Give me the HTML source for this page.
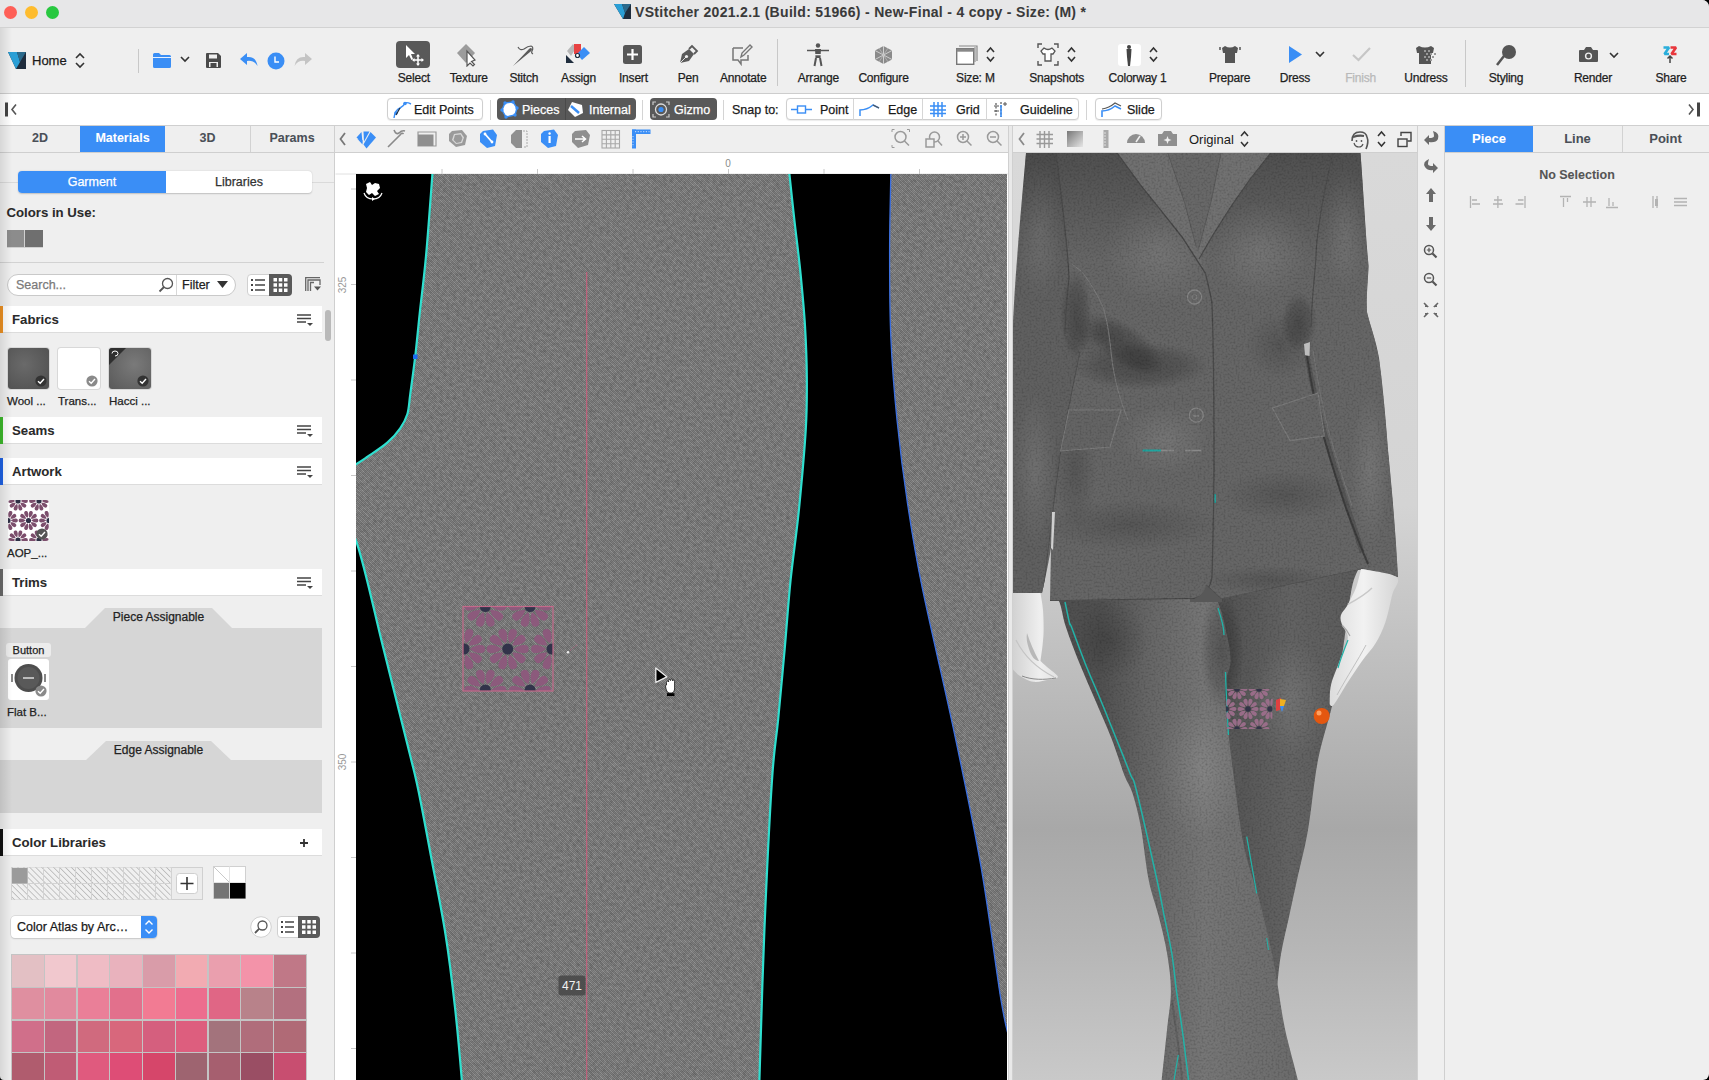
<!DOCTYPE html>
<html><head><meta charset="utf-8">
<style>
*{box-sizing:border-box;margin:0;padding:0}
html,body{width:1709px;height:1080px;overflow:hidden;background:#000}
body{font-family:"Liberation Sans",sans-serif;color:#222;position:relative}
.a{position:absolute}
.t{position:absolute;white-space:nowrap;line-height:1;-webkit-text-stroke:0.25px currentColor}
.c{text-align:center}
.b{font-weight:700}
.t.b{-webkit-text-stroke:0.05px currentColor}
</style></head><body>
<!-- window -->
<div class="a" style="left:0;top:0;width:1709px;height:1080px;background:#efefef;border-radius:0 7px 6px 4px;overflow:hidden">

<!-- TITLE BAR -->
<div class="a" style="left:0;top:0;width:1709px;height:28px;background:#e7e7e8;border-bottom:1px solid #d2d2d2"></div>
<div class="a" style="left:4px;top:6px;width:13px;height:13px;border-radius:50%;background:#fe5f57"></div>
<div class="a" style="left:25px;top:6px;width:13px;height:13px;border-radius:50%;background:#febc2e"></div>
<div class="a" style="left:46px;top:6px;width:13px;height:13px;border-radius:50%;background:#28c840"></div>

<svg class="a" style="left:614px;top:4px" width="17" height="16" viewBox="0 0 17 16"><polygon points="0,0 17,0 17,15 9,15" fill="#1f2d3d"/><polygon points="0,0 8,0 11,9 9,15" fill="#2a9fd6"/><polygon points="8,0 17,0 11,9" fill="#2b6a8c"/></svg>
<div class="t b" style="left:635px;top:5px;font-size:14px;letter-spacing:0.31px;color:#3a3a3a">VStitcher 2021.2.1 (Build: 51966) - New-Final - 4 copy - Size: (M) *</div>


<!-- TOOLBAR -->
<div class="a" style="left:0;top:28px;width:1709px;height:66px;background:#efefef;border-bottom:1px solid #cdcdcd"></div>

<!-- home -->
<svg class="a" style="left:8px;top:52px" width="19" height="17" viewBox="0 0 19 17"><polygon points="0,0 18,0 18,17 8,17" fill="#1f2d3d"/><polygon points="0,0 9,0 12,10 8,17" fill="#2a9fd6"/><polygon points="9,0 18,0 12,10" fill="#2b6a8c"/></svg>
<div class="t" style="left:32px;top:54px;font-size:13px;color:#1a1a1a">Home</div>
<svg class="a" style="left:74px;top:52px" width="12" height="17" viewBox="0 0 12 17"><path d="M2 6 L6 2 L10 6 M2 11 L6 15 L10 11" fill="none" stroke="#333" stroke-width="1.6"/></svg>
<div class="a" style="left:138px;top:49px;width:1px;height:24px;background:#c8c8c8"></div>
<svg class="a" style="left:153px;top:53px" width="18" height="15" viewBox="0 0 18 15"><path d="M0 1.5 Q0 0 1.5 0 H6 L8 2 H16.5 Q18 2 18 3.5 V13.5 Q18 15 16.5 15 H1.5 Q0 15 0 13.5Z" fill="#3a8ef5"/><rect x="0" y="4" width="18" height="1" fill="#e8f1fe"/></svg>
<svg class="a" style="left:180px;top:56px" width="10" height="7" viewBox="0 0 10 7"><path d="M1 1 L5 5 L9 1" fill="none" stroke="#333" stroke-width="1.6"/></svg>
<svg class="a" style="left:206px;top:53px" width="15" height="15" viewBox="0 0 15 15"><path d="M0 1 Q0 0 1 0 H12 L15 3 V14 Q15 15 14 15 H1 Q0 15 0 14Z" fill="#4a4a4a"/><rect x="3" y="1.5" width="8" height="4" fill="#efefef"/><rect x="3" y="9" width="9" height="5" fill="#efefef"/><rect x="4.5" y="10" width="6" height="4" fill="#4a4a4a"/></svg>
<svg class="a" style="left:240px;top:53px" width="18" height="14" viewBox="0 0 18 14"><path d="M7 0 L0 6 L7 12 V8 Q14 7 17.5 13 Q16 3 7 4Z" fill="#3a8ef5"/></svg>
<svg class="a" style="left:267px;top:52px" width="18" height="18" viewBox="0 0 18 18"><circle cx="9" cy="9" r="8.5" fill="#3a8ef5"/><path d="M8 4.5 V10 H12" fill="none" stroke="#fff" stroke-width="1.4"/></svg>
<svg class="a" style="left:294px;top:53px" width="18" height="14" viewBox="0 0 18 14"><path d="M11 0 L18 6 L11 12 V8 Q4 7 0.5 13 Q2 3 11 4Z" fill="#c4c4c4"/></svg>

<!-- select -->
<div class="a" style="left:396px;top:41px;width:34px;height:27px;border-radius:4px;background:#595959"></div>
<svg class="a" style="left:396px;top:41px" width="34" height="27" viewBox="0 0 34 27"><path d="M10 4 V17 L13 14 L15.5 19 L17 18 L15 13 H19Z" fill="#fff"/><path d="M22 14 V24 M17 19 H27" stroke="#fff" stroke-width="1.5"/><path d="M22 13 L20 15.5 H24Z M22 25 L20 22.5 H24Z M16 19 L18.5 17 V21Z M28 19 L25.5 17 V21Z" fill="#fff"/></svg>
<!-- texture -->
<svg class="a" style="left:456px;top:43px" width="24" height="24" viewBox="0 0 24 24"><path d="M10 1 L19 10 L10 20 L1 10Z" fill="#9c9c9c"/><path d="M11 8 L11 23 L14 20 L17 23 L18.5 21.5 L15.5 18.5 L19 17Z" fill="#fff" stroke="#555" stroke-width="1.2"/></svg>
<!-- stitch -->
<svg class="a" style="left:511px;top:43px" width="24" height="24" viewBox="0 0 24 24"><path d="M2 23 L18 6 Q20 4 21 6 Q21 8 19 9Z" fill="#5a5a5a"/><path d="M7 4 Q9 8 13 6 Q17 3 20 3 Q23 4 21 8 Q20 10 22 11" fill="none" stroke="#5a5a5a" stroke-width="1.2"/></svg>
<!-- assign -->
<svg class="a" style="left:566px;top:43px" width="24" height="24" viewBox="0 0 24 24"><path d="M1 8 L7 1 L10 5 L5 13Z" fill="#b7b7b7"/><rect x="8" y="1" width="7" height="10" fill="#e84242"/><path d="M11 11 L18 4 L24 10 L16 17Z" fill="#3a8ef5"/><path d="M0 12 L0 20 L8 20Z" fill="#1f2d3d"/><circle cx="11.5" cy="12.5" r="2" fill="#fff" stroke="#1f2d3d" stroke-width="1.2"/></svg>
<!-- insert -->
<svg class="a" style="left:623px;top:45px" width="19" height="19" viewBox="0 0 19 19"><rect x="0" y="0" width="19" height="19" rx="2.5" fill="#575757"/><path d="M9.5 4 V15 M4 9.5 H15" stroke="#fff" stroke-width="2.2"/></svg>
<!-- pen -->
<svg class="a" style="left:677px;top:44px" width="22" height="22" viewBox="0 0 22 22"><path d="M3 19 L5 10 L12 5 L17 10 L12 17Z" fill="#5a5a5a"/><path d="M12 5 L15 2 L20 7 L17 10" fill="none" stroke="#5a5a5a" stroke-width="1.8"/><circle cx="9.5" cy="12.5" r="1.6" fill="#efefef"/><path d="M3 19 L9 13" stroke="#efefef" stroke-width="0.9"/></svg>
<!-- annotate -->
<svg class="a" style="left:731px;top:43px" width="23" height="23" viewBox="0 0 23 23"><path d="M2 5 H12 M2 5 V17 H7 L10 21 V17 H17 V12" fill="none" stroke="#777" stroke-width="1.5"/><path d="M10 14 L11 10 L19 2 L21 4 L13 12Z" fill="none" stroke="#777" stroke-width="1.4"/></svg>
<div class="a" style="left:777px;top:39px;width:1px;height:47px;background:#c8c8c8"></div>
<!-- arrange -->
<svg class="a" style="left:806px;top:43px" width="24" height="24" viewBox="0 0 24 24"><circle cx="12" cy="2.5" r="2.2" fill="#555"/><path d="M1 7.5 H23" stroke="#555" stroke-width="1.5"/><path d="M9 6 H15 L14.5 15 H9.5Z" fill="#555"/><path d="M10 15 L8.5 23 M14 15 L15.5 23" stroke="#555" stroke-width="2"/><rect x="8.5" y="11" width="7" height="1.3" fill="#efefef"/></svg>
<!-- configure -->
<svg class="a" style="left:874px;top:45px" width="19" height="20" viewBox="0 0 19 20"><path d="M9.5 1 L18 5.5 V14.5 L9.5 19 L1 14.5 V5.5Z" fill="#8a8a8a"/><path d="M9.5 1 V19 M1 5.5 L18 14.5 M18 5.5 L1 14.5" stroke="#cfcfcf" stroke-width="1"/><path d="M5 3 L14 17 M14 3 L5 17" stroke="#bdbdbd" stroke-width="0.7"/></svg>
<!-- size -->
<svg class="a" style="left:956px;top:45px" width="22" height="20" viewBox="0 0 22 20"><rect x="0.7" y="3.7" width="17" height="15.6" fill="#fff" stroke="#777" stroke-width="1.4"/><rect x="0.7" y="3.7" width="17" height="3" fill="#888"/><path d="M3 1 H21 V16" fill="none" stroke="#888" stroke-width="1.2"/><path d="M19 2 V17" stroke="#888" stroke-width="1"/></svg>
<svg class="a" style="left:985px;top:46px" width="11" height="17" viewBox="0 0 11 17"><path d="M2 6 L5.5 2 L9 6 M2 11 L5.5 15 L9 11" fill="none" stroke="#333" stroke-width="1.6"/></svg>
<!-- snapshots -->
<svg class="a" style="left:1037px;top:43px" width="22" height="23" viewBox="0 0 22 23"><path d="M1 5 V1 H5 M17 1 H21 V5 M21 18 V22 H17 M5 22 H1 V18" fill="none" stroke="#555" stroke-width="1.4"/><path d="M7 5 L4 8 L6 11 H8 V18 H14 V11 H16 L18 8 L15 5 Q11 8 7 5Z" fill="#fff" stroke="#555" stroke-width="1.3"/></svg>
<svg class="a" style="left:1066px;top:46px" width="11" height="17" viewBox="0 0 11 17"><path d="M2 6 L5.5 2 L9 6 M2 11 L5.5 15 L9 11" fill="none" stroke="#333" stroke-width="1.6"/></svg>
<!-- colorway -->
<div class="a" style="left:1118px;top:44px;width:23px;height:22px;border-radius:3px;background:#fff"></div>
<svg class="a" style="left:1121px;top:44px" width="16" height="22" viewBox="0 0 16 22"><circle cx="8" cy="3" r="2" fill="#444"/><path d="M5.5 5 H10.5 L10 13 L9 22 H7 L6 13Z" fill="#444"/></svg>
<svg class="a" style="left:1148px;top:46px" width="11" height="17" viewBox="0 0 11 17"><path d="M2 6 L5.5 2 L9 6 M2 11 L5.5 15 L9 11" fill="none" stroke="#333" stroke-width="1.6"/></svg>
<!-- prepare -->
<svg class="a" style="left:1219px;top:46px" width="22" height="17" viewBox="0 0 22 17"><path d="M6 0 L3 2 L4 7 H6 V17 H16 V7 H18 L19 2 L16 0 Q11 3 6 0Z" fill="#555"/><path d="M1 1 V4 M21 1 V4" stroke="#555" stroke-width="1.5"/></svg>
<!-- dress -->
<svg class="a" style="left:1289px;top:46px" width="14" height="17" viewBox="0 0 14 17"><path d="M0 0 L13 8.5 L0 17Z" fill="#3a8ef5"/></svg>
<svg class="a" style="left:1315px;top:51px" width="10" height="7" viewBox="0 0 10 7"><path d="M1 1 L5 5 L9 1" fill="none" stroke="#333" stroke-width="1.6"/></svg>
<!-- finish -->
<svg class="a" style="left:1352px;top:47px" width="19" height="15" viewBox="0 0 19 15"><path d="M1 8 L6.5 13 L18 1" fill="none" stroke="#c6c6c6" stroke-width="2.2"/></svg>
<!-- undress -->
<svg class="a" style="left:1415px;top:45px" width="22" height="20" viewBox="0 0 22 20"><path d="M4 1 L1 3 L2 8 H4 V19 H16 V8 H18 L19 3 L16 1 Q10 4 4 1Z" fill="#555"/><g fill="#999"><rect x="9" y="5" width="2" height="2"/><rect x="13" y="5" width="2" height="2"/><rect x="11" y="8" width="2" height="2"/><rect x="15" y="8" width="2" height="2"/><rect x="9" y="11" width="2" height="2"/><rect x="13" y="11" width="2" height="2"/><rect x="11" y="14" width="2" height="2"/><rect x="15" y="14" width="2" height="2"/><rect x="19" y="8" width="2" height="2"/><rect x="17" y="11" width="2" height="2"/></g></svg>
<div class="a" style="left:1465px;top:40px;width:1px;height:47px;background:#c8c8c8"></div>
<!-- styling -->
<svg class="a" style="left:1496px;top:44px" width="22" height="22" viewBox="0 0 22 22"><circle cx="13" cy="8" r="7" fill="#555"/><path d="M8 12 L1 21" stroke="#555" stroke-width="2.5"/></svg>
<!-- render -->
<svg class="a" style="left:1579px;top:47px" width="19" height="16" viewBox="0 0 19 16"><path d="M0 4 Q0 3 1 3 H5 L7 0 H12 L14 3 H18 Q19 3 19 4 V14 Q19 15 18 15 H1 Q0 15 0 14Z" fill="#555"/><circle cx="9.5" cy="9" r="3.6" fill="#efefef"/><circle cx="9.5" cy="9" r="2.2" fill="#555"/></svg>
<svg class="a" style="left:1609px;top:52px" width="10" height="7" viewBox="0 0 10 7"><path d="M1 1 L5 5 L9 1" fill="none" stroke="#333" stroke-width="1.6"/></svg>
<!-- share -->
<svg class="a" style="left:1662px;top:46px" width="16" height="20" viewBox="0 0 16 20"><path d="M1.5 1.5 H7 L2.5 8 H7" fill="none" stroke="#2aaedb" stroke-width="2.6" stroke-linejoin="bevel"/><path d="M8.5 1.5 H14 L9.5 8 H14.5" fill="none" stroke="#e8373c" stroke-width="2.6" stroke-linejoin="bevel"/><path d="M8 10 V17 M5.5 12.5 L8 10 L10.5 12.5" fill="none" stroke="#444" stroke-width="1.5"/></svg>
<div class="t c" style="left:363.9px;width:100px;top:71.5px;font-size:12px;letter-spacing:-0.2px;color:#1e1e1e">Select</div>
<div class="t c" style="left:418.7px;width:100px;top:71.5px;font-size:12px;letter-spacing:-0.2px;color:#1e1e1e">Texture</div>
<div class="t c" style="left:473.8px;width:100px;top:71.5px;font-size:12px;letter-spacing:-0.2px;color:#1e1e1e">Stitch</div>
<div class="t c" style="left:528.5px;width:100px;top:71.5px;font-size:12px;letter-spacing:-0.2px;color:#1e1e1e">Assign</div>
<div class="t c" style="left:583.4px;width:100px;top:71.5px;font-size:12px;letter-spacing:-0.2px;color:#1e1e1e">Insert</div>
<div class="t c" style="left:638.2px;width:100px;top:71.5px;font-size:12px;letter-spacing:-0.2px;color:#1e1e1e">Pen</div>
<div class="t c" style="left:693.2px;width:100px;top:71.5px;font-size:12px;letter-spacing:-0.2px;color:#1e1e1e">Annotate</div>
<div class="t c" style="left:768.4px;width:100px;top:71.5px;font-size:12px;letter-spacing:-0.2px;color:#1e1e1e">Arrange</div>
<div class="t c" style="left:833.5px;width:100px;top:71.5px;font-size:12px;letter-spacing:-0.2px;color:#1e1e1e">Configure</div>
<div class="t c" style="left:925.4px;width:100px;top:71.5px;font-size:12px;letter-spacing:-0.2px;color:#1e1e1e">Size: M</div>
<div class="t c" style="left:1006.7px;width:100px;top:71.5px;font-size:12px;letter-spacing:-0.2px;color:#1e1e1e">Snapshots</div>
<div class="t c" style="left:1087.5px;width:100px;top:71.5px;font-size:12px;letter-spacing:-0.2px;color:#1e1e1e">Colorway 1</div>
<div class="t c" style="left:1179.6px;width:100px;top:71.5px;font-size:12px;letter-spacing:-0.2px;color:#1e1e1e">Prepare</div>
<div class="t c" style="left:1245.0px;width:100px;top:71.5px;font-size:12px;letter-spacing:-0.2px;color:#1e1e1e">Dress</div>
<div class="t c" style="left:1310.6px;width:100px;top:71.5px;font-size:12px;letter-spacing:-0.2px;color:#b9b9b9">Finish</div>
<div class="t c" style="left:1376.0px;width:100px;top:71.5px;font-size:12px;letter-spacing:-0.2px;color:#1e1e1e">Undress</div>
<div class="t c" style="left:1456.0px;width:100px;top:71.5px;font-size:12px;letter-spacing:-0.2px;color:#1e1e1e">Styling</div>
<div class="t c" style="left:1543.0px;width:100px;top:71.5px;font-size:12px;letter-spacing:-0.2px;color:#1e1e1e">Render</div>
<div class="t c" style="left:1621.0px;width:100px;top:71.5px;font-size:12px;letter-spacing:-0.2px;color:#1e1e1e">Share</div>

<!-- ROW 2 -->
<div class="a" style="left:0;top:94px;width:1709px;height:32px;background:#fff;border-bottom:1px solid #cfcfcf"></div>

<svg class="a" style="left:5px;top:102px" width="13" height="15" viewBox="0 0 13 15"><rect x="0" y="0.5" width="3" height="14" fill="#444"/><path d="M11 2.5 L7 7.5 L11 12.5" fill="none" stroke="#555" stroke-width="1.6"/></svg>
<svg class="a" style="left:1687px;top:102px" width="13" height="15" viewBox="0 0 13 15"><rect x="10" y="0.5" width="3" height="14" fill="#444"/><path d="M2 2.5 L6 7.5 L2 12.5" fill="none" stroke="#555" stroke-width="1.6"/></svg>
<!-- edit points -->
<div class="a" style="left:387px;top:98px;width:96px;height:22px;border:1px solid #cfcfcf;border-radius:4px;background:#fff;box-shadow:0 0.5px 1px rgba(0,0,0,.08)"></div>
<svg class="a" style="left:392px;top:101px" width="20" height="18" viewBox="0 0 20 18"><path d="M2 17 Q3 9 8 7 Q12 5 13 2 Q15 1 19 3" fill="none" stroke="#3a8ef5" stroke-width="1.4"/><circle cx="4" cy="12" r="1.8" fill="#3a8ef5"/><circle cx="13" cy="2.5" r="1.8" fill="#3a8ef5"/><path d="M8 7 L4 14" stroke="#1f2d3d" stroke-width="1.2"/></svg>
<div class="t" style="left:414px;top:104px;font-size:12.5px;color:#1a1a1a">Edit Points</div>
<div class="a" style="left:490px;top:100px;width:1px;height:20px;background:#d4d4d4"></div>
<!-- pieces internal -->
<div class="a" style="left:497px;top:98px;width:139px;height:22px;border-radius:4px;background:#595959"></div>
<div class="a" style="left:565px;top:98px;width:1px;height:22px;background:#4a4a4a"></div>
<svg class="a" style="left:500px;top:100px" width="19" height="19" viewBox="0 0 19 19"><path d="M5 3 L13 2 L17 8 L15 15 L6 17 L2 10Z" fill="#fff" stroke="#3a8ef5" stroke-width="1.4"/><g fill="#3a8ef5"><circle cx="5" cy="3" r="1.7"/><circle cx="13" cy="2" r="1.7"/><circle cx="17" cy="8" r="1.7"/><circle cx="15" cy="15" r="1.7"/><circle cx="6" cy="17" r="1.7"/><circle cx="2" cy="10" r="1.7"/></g></svg>
<div class="t" style="left:522px;top:104px;font-size:12.5px;color:#fff">Pieces</div>
<svg class="a" style="left:567px;top:101px" width="17" height="17" viewBox="0 0 17 17"><path d="M5 1 L15 4 L16 12 L8 16 L1 9Z" fill="#fff"/><path d="M4 5 L12 12" stroke="#3a8ef5" stroke-width="2.5"/></svg>
<div class="t" style="left:589px;top:104px;font-size:12.5px;color:#fff">Internal</div>
<div class="a" style="left:642px;top:100px;width:1px;height:20px;background:#d4d4d4"></div>
<!-- gizmo -->
<div class="a" style="left:650px;top:98px;width:67px;height:22px;border-radius:4px;background:#595959"></div>
<svg class="a" style="left:652px;top:101px" width="18" height="17" viewBox="0 0 18 17"><path d="M1 4 V1 H4 M14 1 H17 V4 M17 13 V16 H14 M4 16 H1 V13" fill="none" stroke="#ccc" stroke-width="1.2"/><circle cx="9" cy="8.5" r="5.5" fill="none" stroke="#ddd" stroke-width="1.3"/><circle cx="9" cy="8.5" r="2.6" fill="#3a8ef5"/></svg>
<div class="t" style="left:674px;top:104px;font-size:12.5px;color:#fff">Gizmo</div>
<div class="a" style="left:723px;top:100px;width:1px;height:20px;background:#d4d4d4"></div>
<div class="t" style="left:732px;top:104px;font-size:12.5px;color:#1a1a1a">Snap to:</div>
<!-- snap group -->
<div class="a" style="left:786px;top:98px;width:293px;height:22px;border:1px solid #cfcfcf;border-radius:4px;background:#fff;box-shadow:0 0.5px 1px rgba(0,0,0,.08)"></div>
<div class="a" style="left:853px;top:99px;width:1px;height:21px;background:#d6d6d6"></div>
<div class="a" style="left:922px;top:99px;width:1px;height:21px;background:#d6d6d6"></div>
<div class="a" style="left:986px;top:99px;width:1px;height:21px;background:#d6d6d6"></div>
<svg class="a" style="left:791px;top:103px" width="21" height="13" viewBox="0 0 21 13"><path d="M0 6.5 H6 M15 6.5 H21" stroke="#3a8ef5" stroke-width="1.3"/><rect x="6.5" y="3" width="8" height="7" fill="none" stroke="#3a8ef5" stroke-width="1.4"/></svg>
<div class="t" style="left:820px;top:104px;font-size:12.5px;color:#1a1a1a">Point</div>
<svg class="a" style="left:859px;top:102px" width="22" height="15" viewBox="0 0 22 15"><path d="M1 14 V8 Q8 8 14 3 L20 6" fill="none" stroke="#3a8ef5" stroke-width="1.5"/><path d="M14 3 L20 6" stroke="#555" stroke-width="1.2"/></svg>
<div class="t" style="left:888px;top:104px;font-size:12.5px;color:#1a1a1a">Edge</div>
<svg class="a" style="left:930px;top:102px" width="16" height="15" viewBox="0 0 16 15"><path d="M4 0 V15 M8 0 V15 M12 0 V15 M0 4 H16 M0 8 H16 M0 11.5 H16" stroke="#3a8ef5" stroke-width="1.5"/></svg>
<div class="t" style="left:956px;top:104px;font-size:12.5px;color:#1a1a1a">Grid</div>
<svg class="a" style="left:993px;top:101px" width="16" height="17" viewBox="0 0 16 17"><path d="M3 2 V16 M8 1 V16" stroke="#555" stroke-width="1.2" stroke-dasharray="2 1.5"/><path d="M8 4 V16" stroke="#3a8ef5" stroke-width="1.6"/><path d="M1 5 H6 M1 10 H6 M12 1 V5 M10 3 H14" stroke="#555" stroke-width="1"/></svg>
<div class="t" style="left:1020px;top:104px;font-size:12.5px;color:#1a1a1a">Guideline</div>
<div class="a" style="left:1086px;top:100px;width:1px;height:20px;background:#d4d4d4"></div>
<!-- slide -->
<div class="a" style="left:1095px;top:98px;width:67px;height:22px;border:1px solid #cfcfcf;border-radius:4px;background:#fff;box-shadow:0 0.5px 1px rgba(0,0,0,.08)"></div>
<svg class="a" style="left:1100px;top:101px" width="22" height="17" viewBox="0 0 22 17"><path d="M2 16 V10 Q9 10 15 5 L21 8" fill="none" stroke="#3a8ef5" stroke-width="1.6"/><path d="M2 8 Q9 7 15 2 L21 5" fill="none" stroke="#555" stroke-width="1.1"/></svg>
<div class="t" style="left:1127px;top:104px;font-size:12.5px;color:#1a1a1a">Slide</div>


<!-- LEFT PANEL -->

<!-- left panel tabs -->
<div class="a" style="left:0;top:126px;width:334px;height:27px;background:#efefef;border-bottom:1px solid #cfcfcf"></div>
<div class="a" style="left:80px;top:126px;width:85px;height:26px;background:#3a8ef6"></div>
<div class="a" style="left:250px;top:126px;width:1px;height:26px;background:#d2d2d2"></div>
<div class="a" style="left:334px;top:126px;width:1px;height:954px;background:#cfcfcf"></div>
<div class="t c b" style="left:0;width:80px;top:132px;font-size:12.5px;color:#4a4f57">2D</div>
<div class="t c b" style="left:80px;width:85px;top:132px;font-size:12.5px;color:#fff">Materials</div>
<div class="t c b" style="left:165px;width:85px;top:132px;font-size:12.5px;color:#4a4f57">3D</div>
<div class="t c b" style="left:250px;width:84px;top:132px;font-size:12.5px;color:#4a4f57">Params</div>

<!-- garment/libraries -->
<div class="a" style="left:0;top:182px;width:334px;height:1px;background:#dadada"></div>
<div class="a" style="left:18px;top:171px;width:294px;height:22px;border-radius:4px;background:#fff;box-shadow:0 0.5px 1.5px rgba(0,0,0,.2)"></div>
<div class="a" style="left:18px;top:171px;width:148px;height:22px;border-radius:4px 0 0 4px;background:#3a8ef6"></div>
<div class="t c" style="left:18px;width:148px;top:176px;font-size:12.5px;color:#fff">Garment</div>
<div class="t c" style="left:166px;width:146px;top:176px;font-size:12.5px;color:#333">Libraries</div>

<div class="t b" style="left:6.5px;top:206px;font-size:13.2px;color:#2a2a2a">Colors in Use:</div>
<div class="a" style="left:7px;top:230px;width:36px;height:18px;background:#d0d0d0"></div>
<div class="a" style="left:7px;top:230px;width:17px;height:17px;background:#8c8c8c"></div>
<div class="a" style="left:25px;top:230px;width:18px;height:17px;background:#6f6f6f"></div>
<div class="a" style="left:0;top:262px;width:324px;height:1px;background:#d2d2d2"></div>

<!-- search -->
<div class="a" style="left:7px;top:274px;width:229px;height:22px;border-radius:11px;background:#fff;border:1px solid #c9c9c9"></div>
<div class="t" style="left:16px;top:279px;font-size:12.5px;color:#7a7a7a">Search...</div>
<svg class="a" style="left:158px;top:277px" width="16" height="16" viewBox="0 0 16 16"><circle cx="9.5" cy="6.5" r="5" fill="none" stroke="#555" stroke-width="1.3"/><path d="M6 10 L1.5 14.5" stroke="#555" stroke-width="1.8"/></svg>
<div class="a" style="left:176px;top:275px;width:1px;height:20px;background:#d8d8d8"></div>
<div class="t" style="left:182px;top:279px;font-size:12.5px;color:#222">Filter</div>
<svg class="a" style="left:217px;top:281px" width="11" height="7" viewBox="0 0 11 7"><path d="M0 0 H11 L5.5 7Z" fill="#333"/></svg>
<div class="a" style="left:247px;top:274px;width:45px;height:22px;border-radius:4px;background:#fff;border:1px solid #d0d0d0"></div>
<div class="a" style="left:269px;top:274px;width:23px;height:22px;border-radius:0 4px 4px 0;background:#5a5a5a"></div>
<svg class="a" style="left:250px;top:278px" width="16" height="14" viewBox="0 0 16 14"><path d="M5 2 H15 M5 7 H15 M5 12 H15" stroke="#444" stroke-width="1.3"/><path d="M1 2 H3 M1 7 H3 M1 12 H3" stroke="#444" stroke-width="2"/></svg>
<svg class="a" style="left:273px;top:278px" width="15" height="14" viewBox="0 0 15 14"><g fill="#fff"><rect x="0.5" y="0" width="3.5" height="3.5"/><rect x="5.75" y="0" width="3.5" height="3.5"/><rect x="11" y="0" width="3.5" height="3.5"/><rect x="0.5" y="5.25" width="3.5" height="3.5"/><rect x="5.75" y="5.25" width="3.5" height="3.5"/><rect x="11" y="5.25" width="3.5" height="3.5"/><rect x="0.5" y="10.5" width="3.5" height="3.5"/><rect x="5.75" y="10.5" width="3.5" height="3.5"/><rect x="11" y="10.5" width="3.5" height="3.5"/></g></svg>
<svg class="a" style="left:305px;top:277px" width="16" height="15" viewBox="0 0 16 15"><path d="M0.7 14 V0.7 H15 M3 14 V3 H15 V8 M5.5 14 V5.5 H9" fill="none" stroke="#666" stroke-width="1.3"/><path d="M9 9.5 H16 L12.5 13.5Z" fill="#555"/></svg>
<div class="a" style="left:0;top:306px;width:322px;height:27px;background:#fff;border-bottom:1px solid #dcdcdc"></div>
<div class="a" style="left:0;top:306px;width:3px;height:27px;background:#ee9223"></div>
<div class="t b" style="left:12px;top:313px;font-size:13.2px;color:#2a2a2a">Fabrics</div>
<svg class="a" style="left:297px;top:314px" width="16" height="13" viewBox="0 0 16 13"><path d="M0 1 H14 M0 4.5 H14 M0 8 H9" stroke="#444" stroke-width="1.6"/><path d="M10 9 H16 L13 12Z" fill="#444"/></svg>
<div class="a" style="left:325px;top:310px;width:6px;height:31px;border-radius:3px;background:#b9b9b9"></div>
<div class="a" style="left:8px;top:348px;width:41px;height:41px;border-radius:3px;background:radial-gradient(circle at 40% 40%,#6a6a6a,#4e4e4e);box-shadow:0 0 0 1px #d8d8d8"></div>
<svg class="a" style="left:35px;top:375px" width="12" height="12" viewBox="0 0 12 12"><circle cx="6" cy="6" r="5.6" fill="#333"/><path d="M3 6.2 L5.2 8.2 L9 4" fill="none" stroke="#fff" stroke-width="1.4"/></svg>
<div class="a" style="left:58px;top:348px;width:42px;height:41px;border-radius:3px;background:#fff;box-shadow:0 0 0 1px #d8d8d8"></div>
<svg class="a" style="left:86px;top:375px" width="12" height="12" viewBox="0 0 12 12"><circle cx="6" cy="6" r="5.6" fill="#8a8a8a"/><path d="M3 6.2 L5.2 8.2 L9 4" fill="none" stroke="#fff" stroke-width="1.4"/></svg>
<div class="a" style="left:109px;top:348px;width:42px;height:41px;border-radius:3px;background:radial-gradient(circle at 60% 40%,#7a7a7a,#595959);box-shadow:0 0 0 1px #d8d8d8;overflow:hidden"><div class="a" style="left:0;top:0;width:0;height:0;border-top:17px solid #2f2f2f;border-right:17px solid transparent"></div></div>
<svg class="a" style="left:111px;top:350px" width="8" height="7" viewBox="0 0 8 7"><path d="M1 3.5 A3 2.5 0 1 1 4 6" fill="none" stroke="#fff" stroke-width="1"/></svg>
<svg class="a" style="left:137px;top:375px" width="12" height="12" viewBox="0 0 12 12"><circle cx="6" cy="6" r="5.6" fill="#333"/><path d="M3 6.2 L5.2 8.2 L9 4" fill="none" stroke="#fff" stroke-width="1.4"/></svg>
<div class="t" style="left:7px;top:396px;font-size:11.5px;color:#222">Wool ...</div>
<div class="t" style="left:58px;top:396px;font-size:11.5px;color:#222">Trans...</div>
<div class="t" style="left:109px;top:396px;font-size:11.5px;color:#222">Hacci ...</div>
<div class="a" style="left:0;top:417px;width:322px;height:27px;background:#fff;border-bottom:1px solid #dcdcdc"></div>
<div class="a" style="left:0;top:417px;width:3px;height:27px;background:#3dba2c"></div>
<div class="t b" style="left:12px;top:424px;font-size:13.2px;color:#2a2a2a">Seams</div>
<svg class="a" style="left:297px;top:425px" width="16" height="13" viewBox="0 0 16 13"><path d="M0 1 H14 M0 4.5 H14 M0 8 H9" stroke="#444" stroke-width="1.6"/><path d="M10 9 H16 L13 12Z" fill="#444"/></svg><div class="a" style="left:0;top:458px;width:322px;height:27px;background:#fff;border-bottom:1px solid #dcdcdc"></div>
<div class="a" style="left:0;top:458px;width:3px;height:27px;background:#1f63e6"></div>
<div class="t b" style="left:12px;top:465px;font-size:13.2px;color:#2a2a2a">Artwork</div>
<svg class="a" style="left:297px;top:466px" width="16" height="13" viewBox="0 0 16 13"><path d="M0 1 H14 M0 4.5 H14 M0 8 H9" stroke="#444" stroke-width="1.6"/><path d="M10 9 H16 L13 12Z" fill="#444"/></svg><svg class="a" style="left:8px;top:500px" width="41" height="41" viewBox="0 0 41 41"><clipPath id="cpa"><rect width="41" height="41" rx="3"/></clipPath><rect width="41" height="41" rx="3" fill="#fff"/><g clip-path="url(#cpa)"><g transform="translate(10.0 1.0) scale(0.470)"><path d="M0 -6 C-1.8 -8 -4.6 -13 -4 -17 A4 4 0 0 1 4 -17 C4.6 -13 1.8 -8 0 -6Z" fill="#7c4e6c" transform="rotate(18)"/><path d="M0 -6 C-1.8 -8 -4.6 -13 -4 -17 A4 4 0 0 1 4 -17 C4.6 -13 1.8 -8 0 -6Z" fill="#7c4e6c" transform="rotate(54)"/><path d="M0 -6 C-1.8 -8 -4.6 -13 -4 -17 A4 4 0 0 1 4 -17 C4.6 -13 1.8 -8 0 -6Z" fill="#7c4e6c" transform="rotate(90)"/><path d="M0 -6 C-1.8 -8 -4.6 -13 -4 -17 A4 4 0 0 1 4 -17 C4.6 -13 1.8 -8 0 -6Z" fill="#7c4e6c" transform="rotate(126)"/><path d="M0 -6 C-1.8 -8 -4.6 -13 -4 -17 A4 4 0 0 1 4 -17 C4.6 -13 1.8 -8 0 -6Z" fill="#7c4e6c" transform="rotate(162)"/><path d="M0 -6 C-1.8 -8 -4.6 -13 -4 -17 A4 4 0 0 1 4 -17 C4.6 -13 1.8 -8 0 -6Z" fill="#7c4e6c" transform="rotate(198)"/><path d="M0 -6 C-1.8 -8 -4.6 -13 -4 -17 A4 4 0 0 1 4 -17 C4.6 -13 1.8 -8 0 -6Z" fill="#7c4e6c" transform="rotate(234)"/><path d="M0 -6 C-1.8 -8 -4.6 -13 -4 -17 A4 4 0 0 1 4 -17 C4.6 -13 1.8 -8 0 -6Z" fill="#7c4e6c" transform="rotate(270)"/><path d="M0 -6 C-1.8 -8 -4.6 -13 -4 -17 A4 4 0 0 1 4 -17 C4.6 -13 1.8 -8 0 -6Z" fill="#7c4e6c" transform="rotate(306)"/><path d="M0 -6 C-1.8 -8 -4.6 -13 -4 -17 A4 4 0 0 1 4 -17 C4.6 -13 1.8 -8 0 -6Z" fill="#7c4e6c" transform="rotate(342)"/><circle r="5.5" fill="#2e2f45"/></g><g transform="translate(31.0 1.0) scale(0.470)"><path d="M0 -6 C-1.8 -8 -4.6 -13 -4 -17 A4 4 0 0 1 4 -17 C4.6 -13 1.8 -8 0 -6Z" fill="#7c4e6c" transform="rotate(18)"/><path d="M0 -6 C-1.8 -8 -4.6 -13 -4 -17 A4 4 0 0 1 4 -17 C4.6 -13 1.8 -8 0 -6Z" fill="#7c4e6c" transform="rotate(54)"/><path d="M0 -6 C-1.8 -8 -4.6 -13 -4 -17 A4 4 0 0 1 4 -17 C4.6 -13 1.8 -8 0 -6Z" fill="#7c4e6c" transform="rotate(90)"/><path d="M0 -6 C-1.8 -8 -4.6 -13 -4 -17 A4 4 0 0 1 4 -17 C4.6 -13 1.8 -8 0 -6Z" fill="#7c4e6c" transform="rotate(126)"/><path d="M0 -6 C-1.8 -8 -4.6 -13 -4 -17 A4 4 0 0 1 4 -17 C4.6 -13 1.8 -8 0 -6Z" fill="#7c4e6c" transform="rotate(162)"/><path d="M0 -6 C-1.8 -8 -4.6 -13 -4 -17 A4 4 0 0 1 4 -17 C4.6 -13 1.8 -8 0 -6Z" fill="#7c4e6c" transform="rotate(198)"/><path d="M0 -6 C-1.8 -8 -4.6 -13 -4 -17 A4 4 0 0 1 4 -17 C4.6 -13 1.8 -8 0 -6Z" fill="#7c4e6c" transform="rotate(234)"/><path d="M0 -6 C-1.8 -8 -4.6 -13 -4 -17 A4 4 0 0 1 4 -17 C4.6 -13 1.8 -8 0 -6Z" fill="#7c4e6c" transform="rotate(270)"/><path d="M0 -6 C-1.8 -8 -4.6 -13 -4 -17 A4 4 0 0 1 4 -17 C4.6 -13 1.8 -8 0 -6Z" fill="#7c4e6c" transform="rotate(306)"/><path d="M0 -6 C-1.8 -8 -4.6 -13 -4 -17 A4 4 0 0 1 4 -17 C4.6 -13 1.8 -8 0 -6Z" fill="#7c4e6c" transform="rotate(342)"/><circle r="5.5" fill="#2e2f45"/></g><g transform="translate(0.0 20.5) scale(0.470)"><path d="M0 -6 C-1.8 -8 -4.6 -13 -4 -17 A4 4 0 0 1 4 -17 C4.6 -13 1.8 -8 0 -6Z" fill="#7c4e6c" transform="rotate(18)"/><path d="M0 -6 C-1.8 -8 -4.6 -13 -4 -17 A4 4 0 0 1 4 -17 C4.6 -13 1.8 -8 0 -6Z" fill="#7c4e6c" transform="rotate(54)"/><path d="M0 -6 C-1.8 -8 -4.6 -13 -4 -17 A4 4 0 0 1 4 -17 C4.6 -13 1.8 -8 0 -6Z" fill="#7c4e6c" transform="rotate(90)"/><path d="M0 -6 C-1.8 -8 -4.6 -13 -4 -17 A4 4 0 0 1 4 -17 C4.6 -13 1.8 -8 0 -6Z" fill="#7c4e6c" transform="rotate(126)"/><path d="M0 -6 C-1.8 -8 -4.6 -13 -4 -17 A4 4 0 0 1 4 -17 C4.6 -13 1.8 -8 0 -6Z" fill="#7c4e6c" transform="rotate(162)"/><path d="M0 -6 C-1.8 -8 -4.6 -13 -4 -17 A4 4 0 0 1 4 -17 C4.6 -13 1.8 -8 0 -6Z" fill="#7c4e6c" transform="rotate(198)"/><path d="M0 -6 C-1.8 -8 -4.6 -13 -4 -17 A4 4 0 0 1 4 -17 C4.6 -13 1.8 -8 0 -6Z" fill="#7c4e6c" transform="rotate(234)"/><path d="M0 -6 C-1.8 -8 -4.6 -13 -4 -17 A4 4 0 0 1 4 -17 C4.6 -13 1.8 -8 0 -6Z" fill="#7c4e6c" transform="rotate(270)"/><path d="M0 -6 C-1.8 -8 -4.6 -13 -4 -17 A4 4 0 0 1 4 -17 C4.6 -13 1.8 -8 0 -6Z" fill="#7c4e6c" transform="rotate(306)"/><path d="M0 -6 C-1.8 -8 -4.6 -13 -4 -17 A4 4 0 0 1 4 -17 C4.6 -13 1.8 -8 0 -6Z" fill="#7c4e6c" transform="rotate(342)"/><circle r="5.5" fill="#2e2f45"/></g><g transform="translate(20.5 20.5) scale(0.470)"><path d="M0 -6 C-1.8 -8 -4.6 -13 -4 -17 A4 4 0 0 1 4 -17 C4.6 -13 1.8 -8 0 -6Z" fill="#7c4e6c" transform="rotate(18)"/><path d="M0 -6 C-1.8 -8 -4.6 -13 -4 -17 A4 4 0 0 1 4 -17 C4.6 -13 1.8 -8 0 -6Z" fill="#7c4e6c" transform="rotate(54)"/><path d="M0 -6 C-1.8 -8 -4.6 -13 -4 -17 A4 4 0 0 1 4 -17 C4.6 -13 1.8 -8 0 -6Z" fill="#7c4e6c" transform="rotate(90)"/><path d="M0 -6 C-1.8 -8 -4.6 -13 -4 -17 A4 4 0 0 1 4 -17 C4.6 -13 1.8 -8 0 -6Z" fill="#7c4e6c" transform="rotate(126)"/><path d="M0 -6 C-1.8 -8 -4.6 -13 -4 -17 A4 4 0 0 1 4 -17 C4.6 -13 1.8 -8 0 -6Z" fill="#7c4e6c" transform="rotate(162)"/><path d="M0 -6 C-1.8 -8 -4.6 -13 -4 -17 A4 4 0 0 1 4 -17 C4.6 -13 1.8 -8 0 -6Z" fill="#7c4e6c" transform="rotate(198)"/><path d="M0 -6 C-1.8 -8 -4.6 -13 -4 -17 A4 4 0 0 1 4 -17 C4.6 -13 1.8 -8 0 -6Z" fill="#7c4e6c" transform="rotate(234)"/><path d="M0 -6 C-1.8 -8 -4.6 -13 -4 -17 A4 4 0 0 1 4 -17 C4.6 -13 1.8 -8 0 -6Z" fill="#7c4e6c" transform="rotate(270)"/><path d="M0 -6 C-1.8 -8 -4.6 -13 -4 -17 A4 4 0 0 1 4 -17 C4.6 -13 1.8 -8 0 -6Z" fill="#7c4e6c" transform="rotate(306)"/><path d="M0 -6 C-1.8 -8 -4.6 -13 -4 -17 A4 4 0 0 1 4 -17 C4.6 -13 1.8 -8 0 -6Z" fill="#7c4e6c" transform="rotate(342)"/><circle r="5.5" fill="#2e2f45"/></g><g transform="translate(41.0 20.5) scale(0.470)"><path d="M0 -6 C-1.8 -8 -4.6 -13 -4 -17 A4 4 0 0 1 4 -17 C4.6 -13 1.8 -8 0 -6Z" fill="#7c4e6c" transform="rotate(18)"/><path d="M0 -6 C-1.8 -8 -4.6 -13 -4 -17 A4 4 0 0 1 4 -17 C4.6 -13 1.8 -8 0 -6Z" fill="#7c4e6c" transform="rotate(54)"/><path d="M0 -6 C-1.8 -8 -4.6 -13 -4 -17 A4 4 0 0 1 4 -17 C4.6 -13 1.8 -8 0 -6Z" fill="#7c4e6c" transform="rotate(90)"/><path d="M0 -6 C-1.8 -8 -4.6 -13 -4 -17 A4 4 0 0 1 4 -17 C4.6 -13 1.8 -8 0 -6Z" fill="#7c4e6c" transform="rotate(126)"/><path d="M0 -6 C-1.8 -8 -4.6 -13 -4 -17 A4 4 0 0 1 4 -17 C4.6 -13 1.8 -8 0 -6Z" fill="#7c4e6c" transform="rotate(162)"/><path d="M0 -6 C-1.8 -8 -4.6 -13 -4 -17 A4 4 0 0 1 4 -17 C4.6 -13 1.8 -8 0 -6Z" fill="#7c4e6c" transform="rotate(198)"/><path d="M0 -6 C-1.8 -8 -4.6 -13 -4 -17 A4 4 0 0 1 4 -17 C4.6 -13 1.8 -8 0 -6Z" fill="#7c4e6c" transform="rotate(234)"/><path d="M0 -6 C-1.8 -8 -4.6 -13 -4 -17 A4 4 0 0 1 4 -17 C4.6 -13 1.8 -8 0 -6Z" fill="#7c4e6c" transform="rotate(270)"/><path d="M0 -6 C-1.8 -8 -4.6 -13 -4 -17 A4 4 0 0 1 4 -17 C4.6 -13 1.8 -8 0 -6Z" fill="#7c4e6c" transform="rotate(306)"/><path d="M0 -6 C-1.8 -8 -4.6 -13 -4 -17 A4 4 0 0 1 4 -17 C4.6 -13 1.8 -8 0 -6Z" fill="#7c4e6c" transform="rotate(342)"/><circle r="5.5" fill="#2e2f45"/></g><g transform="translate(10.0 40.0) scale(0.470)"><path d="M0 -6 C-1.8 -8 -4.6 -13 -4 -17 A4 4 0 0 1 4 -17 C4.6 -13 1.8 -8 0 -6Z" fill="#7c4e6c" transform="rotate(18)"/><path d="M0 -6 C-1.8 -8 -4.6 -13 -4 -17 A4 4 0 0 1 4 -17 C4.6 -13 1.8 -8 0 -6Z" fill="#7c4e6c" transform="rotate(54)"/><path d="M0 -6 C-1.8 -8 -4.6 -13 -4 -17 A4 4 0 0 1 4 -17 C4.6 -13 1.8 -8 0 -6Z" fill="#7c4e6c" transform="rotate(90)"/><path d="M0 -6 C-1.8 -8 -4.6 -13 -4 -17 A4 4 0 0 1 4 -17 C4.6 -13 1.8 -8 0 -6Z" fill="#7c4e6c" transform="rotate(126)"/><path d="M0 -6 C-1.8 -8 -4.6 -13 -4 -17 A4 4 0 0 1 4 -17 C4.6 -13 1.8 -8 0 -6Z" fill="#7c4e6c" transform="rotate(162)"/><path d="M0 -6 C-1.8 -8 -4.6 -13 -4 -17 A4 4 0 0 1 4 -17 C4.6 -13 1.8 -8 0 -6Z" fill="#7c4e6c" transform="rotate(198)"/><path d="M0 -6 C-1.8 -8 -4.6 -13 -4 -17 A4 4 0 0 1 4 -17 C4.6 -13 1.8 -8 0 -6Z" fill="#7c4e6c" transform="rotate(234)"/><path d="M0 -6 C-1.8 -8 -4.6 -13 -4 -17 A4 4 0 0 1 4 -17 C4.6 -13 1.8 -8 0 -6Z" fill="#7c4e6c" transform="rotate(270)"/><path d="M0 -6 C-1.8 -8 -4.6 -13 -4 -17 A4 4 0 0 1 4 -17 C4.6 -13 1.8 -8 0 -6Z" fill="#7c4e6c" transform="rotate(306)"/><path d="M0 -6 C-1.8 -8 -4.6 -13 -4 -17 A4 4 0 0 1 4 -17 C4.6 -13 1.8 -8 0 -6Z" fill="#7c4e6c" transform="rotate(342)"/><circle r="5.5" fill="#2e2f45"/></g><g transform="translate(31.0 40.0) scale(0.470)"><path d="M0 -6 C-1.8 -8 -4.6 -13 -4 -17 A4 4 0 0 1 4 -17 C4.6 -13 1.8 -8 0 -6Z" fill="#7c4e6c" transform="rotate(18)"/><path d="M0 -6 C-1.8 -8 -4.6 -13 -4 -17 A4 4 0 0 1 4 -17 C4.6 -13 1.8 -8 0 -6Z" fill="#7c4e6c" transform="rotate(54)"/><path d="M0 -6 C-1.8 -8 -4.6 -13 -4 -17 A4 4 0 0 1 4 -17 C4.6 -13 1.8 -8 0 -6Z" fill="#7c4e6c" transform="rotate(90)"/><path d="M0 -6 C-1.8 -8 -4.6 -13 -4 -17 A4 4 0 0 1 4 -17 C4.6 -13 1.8 -8 0 -6Z" fill="#7c4e6c" transform="rotate(126)"/><path d="M0 -6 C-1.8 -8 -4.6 -13 -4 -17 A4 4 0 0 1 4 -17 C4.6 -13 1.8 -8 0 -6Z" fill="#7c4e6c" transform="rotate(162)"/><path d="M0 -6 C-1.8 -8 -4.6 -13 -4 -17 A4 4 0 0 1 4 -17 C4.6 -13 1.8 -8 0 -6Z" fill="#7c4e6c" transform="rotate(198)"/><path d="M0 -6 C-1.8 -8 -4.6 -13 -4 -17 A4 4 0 0 1 4 -17 C4.6 -13 1.8 -8 0 -6Z" fill="#7c4e6c" transform="rotate(234)"/><path d="M0 -6 C-1.8 -8 -4.6 -13 -4 -17 A4 4 0 0 1 4 -17 C4.6 -13 1.8 -8 0 -6Z" fill="#7c4e6c" transform="rotate(270)"/><path d="M0 -6 C-1.8 -8 -4.6 -13 -4 -17 A4 4 0 0 1 4 -17 C4.6 -13 1.8 -8 0 -6Z" fill="#7c4e6c" transform="rotate(306)"/><path d="M0 -6 C-1.8 -8 -4.6 -13 -4 -17 A4 4 0 0 1 4 -17 C4.6 -13 1.8 -8 0 -6Z" fill="#7c4e6c" transform="rotate(342)"/><circle r="5.5" fill="#2e2f45"/></g></g></svg><svg class="a" style="left:36px;top:528px" width="12" height="12" viewBox="0 0 12 12"><circle cx="6" cy="6" r="5.6" fill="#555"/><path d="M3 6.2 L5.2 8.2 L9 4" fill="none" stroke="#fff" stroke-width="1.4"/></svg>
<div class="t" style="left:7px;top:548px;font-size:11.5px;color:#222">AOP_...</div>
<div class="a" style="left:0;top:569px;width:322px;height:27px;background:#fff;border-bottom:1px solid #dcdcdc"></div>
<div class="a" style="left:0;top:569px;width:3px;height:27px;background:#6a6a6a"></div>
<div class="t b" style="left:12px;top:576px;font-size:13.2px;color:#2a2a2a">Trims</div>
<svg class="a" style="left:297px;top:577px" width="16" height="13" viewBox="0 0 16 13"><path d="M0 1 H14 M0 4.5 H14 M0 8 H9" stroke="#444" stroke-width="1.6"/><path d="M10 9 H16 L13 12Z" fill="#444"/></svg>
<svg class="a" style="left:0;top:607px" width="322" height="122" viewBox="0 0 322 122"><path d="M85 21 L105 1 H212 L232 21 H322 V121 H0 V21Z" fill="#d6d6d6"/></svg>
<div class="t c" style="left:85px;width:147px;top:611px;font-size:12px;color:#222">Piece Assignable</div>
<div class="a" style="left:6px;top:643px;width:45px;height:14px;border-radius:3px;background:#ececec"></div>
<div class="t c" style="left:6px;width:45px;top:645px;font-size:11px;color:#222">Button</div>
<div class="a" style="left:8px;top:659px;width:41px;height:41px;border-radius:3px;background:#fff"></div>
<svg class="a" style="left:8px;top:659px" width="41" height="41" viewBox="0 0 41 41"><circle cx="20.5" cy="19" r="14" fill="#4d4d4d"/><circle cx="20.5" cy="19" r="11" fill="#595959"/><path d="M15 19 H26" stroke="#ddd" stroke-width="1.5"/><rect x="3" y="15" width="2" height="8" fill="#888"/><rect x="36" y="15" width="2" height="8" fill="#888"/></svg>
<svg class="a" style="left:35px;top:685px" width="12" height="12" viewBox="0 0 12 12"><circle cx="6" cy="6" r="5.6" fill="#8a8a8a"/><path d="M3 6.2 L5.2 8.2 L9 4" fill="none" stroke="#fff" stroke-width="1.4"/></svg>
<div class="t" style="left:7px;top:707px;font-size:11.5px;color:#222">Flat B...</div>

<svg class="a" style="left:0;top:740px" width="322" height="74" viewBox="0 0 322 74"><path d="M86 20 L106 1 H211 L231 20 H322 V73 H0 V20Z" fill="#d6d6d6"/></svg>
<div class="t c" style="left:86px;width:145px;top:744px;font-size:12px;color:#222">Edge Assignable</div>
<div class="a" style="left:0;top:829px;width:322px;height:27px;background:#fff;border-bottom:1px solid #dcdcdc"></div>
<div class="a" style="left:0;top:829px;width:3px;height:27px;background:#111111"></div>
<div class="t b" style="left:12px;top:836px;font-size:13.2px;color:#2a2a2a">Color Libraries</div>
<svg class="a" style="left:299px;top:838px" width="10" height="10" viewBox="0 0 10 10"><path d="M5 1 V9 M1 5 H9" stroke="#333" stroke-width="1.8"/></svg><svg class="a" style="left:11px;top:867px" width="192" height="33" viewBox="0 0 192 33"><defs><pattern id="hp" width="4.2" height="4.2" patternUnits="userSpaceOnUse" patternTransform="rotate(-45)"><rect width="4.2" height="4.2" fill="#f0f0f0"/><path d="M0 0 V4.2" stroke="#aaaaaa" stroke-width="1.3"/></pattern></defs><rect x="0.5" y="0.5" width="191" height="32" fill="#ececec" stroke="#d0d0d0"/><rect x="0.5" y="0.5" width="159" height="32" fill="url(#hp)"/><path d="M0.5 0 V33" stroke="#d3d3d3" stroke-width="1"/><path d="M16.5 0 V33" stroke="#d3d3d3" stroke-width="1"/><path d="M32.5 0 V33" stroke="#d3d3d3" stroke-width="1"/><path d="M48.5 0 V33" stroke="#d3d3d3" stroke-width="1"/><path d="M64.5 0 V33" stroke="#d3d3d3" stroke-width="1"/><path d="M80.5 0 V33" stroke="#d3d3d3" stroke-width="1"/><path d="M96.5 0 V33" stroke="#d3d3d3" stroke-width="1"/><path d="M112.5 0 V33" stroke="#d3d3d3" stroke-width="1"/><path d="M128.5 0 V33" stroke="#d3d3d3" stroke-width="1"/><path d="M144.5 0 V33" stroke="#d3d3d3" stroke-width="1"/><path d="M160.5 0 V33" stroke="#d3d3d3" stroke-width="1"/><path d="M0 16.5 H160" stroke="#d3d3d3"/><rect x="1" y="1" width="15.5" height="15.5" fill="#9b9b9b"/><rect x="165.5" y="6.5" width="21" height="20" rx="3" fill="#fff" stroke="#cfcfcf"/><path d="M176 10 V23 M169.5 16.5 H182.5" stroke="#333" stroke-width="1.6"/></svg>
<svg class="a" style="left:213px;top:866px" width="33" height="33" viewBox="0 0 33 33"><rect x="0.5" y="0.5" width="32" height="32" fill="#fff" stroke="#d0d0d0"/><path d="M1 1 L16 16" stroke="#bbb" stroke-width="0.8"/><rect x="1" y="17" width="15.5" height="15.5" fill="#747474"/><rect x="17" y="17" width="15.5" height="15.5" fill="#000"/><path d="M16.5 0 V33 M0 16.5 H33" stroke="#ddd" stroke-width="0.8"/></svg>
<div class="a" style="left:11px;top:916px;width:146px;height:22px;border-radius:4px;background:#fff;box-shadow:0 0 0 0.5px #c8c8c8,0 1px 1.5px rgba(0,0,0,.15)"></div>
<div class="a" style="left:141px;top:916px;width:16px;height:22px;border-radius:0 4px 4px 0;background:#3a8ef6"></div>
<svg class="a" style="left:143px;top:918px" width="12" height="18" viewBox="0 0 12 18"><path d="M2.5 6.5 L6 3 L9.5 6.5 M2.5 11.5 L6 15 L9.5 11.5" fill="none" stroke="#fff" stroke-width="1.4"/></svg>
<div class="t" style="left:17px;top:921px;font-size:12.5px;color:#1a1a1a">Color Atlas by Arc…</div>
<svg class="a" style="left:250px;top:916px" width="22" height="22" viewBox="0 0 22 22"><circle cx="11" cy="11" r="10.3" fill="#fff" stroke="#d0d0d0"/><circle cx="12.5" cy="9.5" r="4.5" fill="none" stroke="#555" stroke-width="1.3"/><path d="M9.3 12.7 L5 17" stroke="#555" stroke-width="1.8"/></svg>
<div class="a" style="left:277px;top:916px;width:43px;height:22px;border-radius:4px;background:#fff;border:1px solid #d0d0d0"></div>
<div class="a" style="left:298px;top:916px;width:22px;height:22px;border-radius:0 4px 4px 0;background:#5a5a5a"></div>
<svg class="a" style="left:280px;top:920px" width="15" height="14" viewBox="0 0 15 14"><path d="M5 2 H14 M5 7 H14 M5 12 H14" stroke="#444" stroke-width="1.3"/><path d="M1 2 H3 M1 7 H3 M1 12 H3" stroke="#444" stroke-width="2"/></svg>
<svg class="a" style="left:302px;top:920px" width="14" height="14" viewBox="0 0 14 14"><g fill="#fff"><rect x="0" y="0" width="3.5" height="3.5"/><rect x="5.25" y="0" width="3.5" height="3.5"/><rect x="10.5" y="0" width="3.5" height="3.5"/><rect x="0" y="5.25" width="3.5" height="3.5"/><rect x="5.25" y="5.25" width="3.5" height="3.5"/><rect x="10.5" y="5.25" width="3.5" height="3.5"/><rect x="0" y="10.5" width="3.5" height="3.5"/><rect x="5.25" y="10.5" width="3.5" height="3.5"/><rect x="10.5" y="10.5" width="3.5" height="3.5"/></g></svg>
<div class="a" style="left:11px;top:954px;width:296px;height:126px;background:#c4c4c4"></div><div class="a" style="left:12.00px;top:955.00px;width:31.5px;height:31.5px;background:#e3c0c4"></div><div class="a" style="left:44.75px;top:955.00px;width:31.5px;height:31.5px;background:#f1c8ce"></div><div class="a" style="left:77.50px;top:955.00px;width:31.5px;height:31.5px;background:#efbcc5"></div><div class="a" style="left:110.25px;top:955.00px;width:31.5px;height:31.5px;background:#e9b2bd"></div><div class="a" style="left:143.00px;top:955.00px;width:31.5px;height:31.5px;background:#d99ca9"></div><div class="a" style="left:175.75px;top:955.00px;width:31.5px;height:31.5px;background:#f2abb2"></div><div class="a" style="left:208.50px;top:955.00px;width:31.5px;height:31.5px;background:#ea9fae"></div><div class="a" style="left:241.25px;top:955.00px;width:31.5px;height:31.5px;background:#f393a9"></div><div class="a" style="left:274.00px;top:955.00px;width:31.5px;height:31.5px;background:#c07887"></div><div class="a" style="left:12.00px;top:987.75px;width:31.5px;height:31.5px;background:#df8fa0"></div><div class="a" style="left:44.75px;top:987.75px;width:31.5px;height:31.5px;background:#e18a9e"></div><div class="a" style="left:77.50px;top:987.75px;width:31.5px;height:31.5px;background:#ea7f98"></div><div class="a" style="left:110.25px;top:987.75px;width:31.5px;height:31.5px;background:#e2708c"></div><div class="a" style="left:143.00px;top:987.75px;width:31.5px;height:31.5px;background:#f27b93"></div><div class="a" style="left:175.75px;top:987.75px;width:31.5px;height:31.5px;background:#ec6d8e"></div><div class="a" style="left:208.50px;top:987.75px;width:31.5px;height:31.5px;background:#e06685"></div><div class="a" style="left:241.25px;top:987.75px;width:31.5px;height:31.5px;background:#b8828a"></div><div class="a" style="left:274.00px;top:987.75px;width:31.5px;height:31.5px;background:#b3707f"></div><div class="a" style="left:12.00px;top:1020.50px;width:31.5px;height:31.5px;background:#d06f8a"></div><div class="a" style="left:44.75px;top:1020.50px;width:31.5px;height:31.5px;background:#c2667f"></div><div class="a" style="left:77.50px;top:1020.50px;width:31.5px;height:31.5px;background:#d06a7e"></div><div class="a" style="left:110.25px;top:1020.50px;width:31.5px;height:31.5px;background:#d8677c"></div><div class="a" style="left:143.00px;top:1020.50px;width:31.5px;height:31.5px;background:#d55f7e"></div><div class="a" style="left:175.75px;top:1020.50px;width:31.5px;height:31.5px;background:#dd5e7e"></div><div class="a" style="left:208.50px;top:1020.50px;width:31.5px;height:31.5px;background:#a3737c"></div><div class="a" style="left:241.25px;top:1020.50px;width:31.5px;height:31.5px;background:#b06d7b"></div><div class="a" style="left:274.00px;top:1020.50px;width:31.5px;height:31.5px;background:#b06a76"></div><div class="a" style="left:12.00px;top:1053.25px;width:31.5px;height:31.5px;background:#b05c6e"></div><div class="a" style="left:44.75px;top:1053.25px;width:31.5px;height:31.5px;background:#c05c75"></div><div class="a" style="left:77.50px;top:1053.25px;width:31.5px;height:31.5px;background:#e05a7e"></div><div class="a" style="left:110.25px;top:1053.25px;width:31.5px;height:31.5px;background:#de4d76"></div><div class="a" style="left:143.00px;top:1053.25px;width:31.5px;height:31.5px;background:#d6466a"></div><div class="a" style="left:175.75px;top:1053.25px;width:31.5px;height:31.5px;background:#9e6470"></div><div class="a" style="left:208.50px;top:1053.25px;width:31.5px;height:31.5px;background:#a65f6f"></div><div class="a" style="left:241.25px;top:1053.25px;width:31.5px;height:31.5px;background:#9a4e64"></div><div class="a" style="left:274.00px;top:1053.25px;width:31.5px;height:31.5px;background:#c84e70"></div><div class="a" style="left:0;top:28px;width:12px;height:1052px;background:linear-gradient(to right,rgba(0,0,0,.10),rgba(0,0,0,0))"></div>

<!-- 2D VIEW -->

<div class="a" style="left:335px;top:126px;width:673px;height:27px;background:#efefef;border-bottom:1px solid #cfcfcf"></div>
<div class="a" style="left:335px;top:153px;width:673px;height:927px;background:#fff"></div>
<div class="a" style="left:1008px;top:126px;width:5px;height:954px;background:#e9e9e9;border-left:1px solid #d0d0d0;border-right:1px solid #d0d0d0"></div>
<svg class="a" style="left:0;top:0" width="1709" height="1080" viewBox="0 0 1709 1080">
<defs>
<pattern id="twill" width="4" height="4" patternUnits="userSpaceOnUse"><rect width="4" height="4" fill="#767676"/><rect x="0" y="0" width="1" height="1" fill="#949494"/><rect x="1" y="1" width="1" height="1" fill="#949494"/><rect x="2" y="2" width="1" height="1" fill="#949494"/><rect x="3" y="3" width="1" height="1" fill="#949494"/><rect x="2" y="0" width="1" height="1" fill="#868686"/><rect x="3" y="1" width="1" height="1" fill="#868686"/><rect x="0" y="2" width="1" height="1" fill="#868686"/><rect x="1" y="3" width="1" height="1" fill="#868686"/></pattern>
<filter id="noise" x="0" y="0" width="100%" height="100%" filterUnits="userSpaceOnUse"><feTurbulence type="fractalNoise" baseFrequency="0.3" numOctaves="2" seed="7"/><feColorMatrix type="matrix" values="0 0 0 0 0  0 0 0 0 0  0 0 0 0 0  0.35 0 0 0 -0.1"/><feComposite in2="SourceGraphic" operator="in"/></filter>
<clipPath id="cv"><rect x="356" y="174" width="651" height="906"/></clipPath>
</defs>
<path d="M335.5 174 H1008" stroke="#e0e0e0" stroke-width="1"/>
<path d="M442.0 169 V174" stroke="#c8c8c8" stroke-width="1"/><path d="M537.5 169 V174" stroke="#c8c8c8" stroke-width="1"/><path d="M633.0 169 V174" stroke="#c8c8c8" stroke-width="1"/><path d="M728.5 169 V174" stroke="#c8c8c8" stroke-width="1"/><path d="M824.0 169 V174" stroke="#c8c8c8" stroke-width="1"/><path d="M919.5 169 V174" stroke="#c8c8c8" stroke-width="1"/><path d="M1015.0 169 V174" stroke="#c8c8c8" stroke-width="1"/><path d="M351 189.0 H356" stroke="#c8c8c8" stroke-width="1"/><path d="M351 284.5 H356" stroke="#c8c8c8" stroke-width="1"/><path d="M351 380.0 H356" stroke="#c8c8c8" stroke-width="1"/><path d="M351 475.5 H356" stroke="#c8c8c8" stroke-width="1"/><path d="M351 571.0 H356" stroke="#c8c8c8" stroke-width="1"/><path d="M351 666.5 H356" stroke="#c8c8c8" stroke-width="1"/><path d="M351 762.0 H356" stroke="#c8c8c8" stroke-width="1"/><path d="M351 857.5 H356" stroke="#c8c8c8" stroke-width="1"/><path d="M351 953.0 H356" stroke="#c8c8c8" stroke-width="1"/><path d="M351 1048.5 H356" stroke="#c8c8c8" stroke-width="1"/>
<text x="728" y="167" font-family="Liberation Sans" font-size="10" fill="#8a8a8a" text-anchor="middle">0</text>
<text transform="translate(346 285) rotate(-90)" font-family="Liberation Sans" font-size="10" fill="#9a9a9a" text-anchor="middle">325</text>
<text transform="translate(346 762) rotate(-90)" font-family="Liberation Sans" font-size="10" fill="#9a9a9a" text-anchor="middle">350</text>
<rect x="356" y="174" width="651" height="906" fill="#000"/>
<g clip-path="url(#cv)">
<path d="M432.6 166.0 C432.6 167.3 433.5 159.0 432.4 174.0 C431.3 189.0 428.1 232.9 426.0 256.1 C423.9 279.4 421.5 296.8 419.7 313.5 C417.9 330.2 416.8 343.2 415.2 356.6 C413.6 370.0 411.6 384.3 410.3 393.9 C409.0 403.5 409.1 408.3 407.4 414.0 C405.7 419.7 403.5 423.5 400.2 428.3 C396.9 433.1 392.8 437.9 387.3 442.7 C381.8 447.5 372.4 453.4 367.2 457.0 C362.0 460.6 360.5 461.7 356.0 464.2 C351.5 466.7 342.7 470.7 340.0 472.0 L340 534 L340.0 534.0 C342.7 535.1 348.7 521.4 356.0 540.7 C363.3 560.0 374.8 614.2 383.7 649.6 C392.6 685.0 403.8 729.9 409.6 753.3 C415.4 776.7 414.5 771.8 418.3 790.0 C422.1 808.2 427.6 838.3 432.2 862.5 C436.8 886.7 441.8 910.8 445.6 935.0 C449.4 959.2 452.3 983.3 455.0 1007.5 C457.7 1031.7 460.6 1065.4 461.8 1080.0 C463.1 1094.6 462.4 1092.5 462.5 1095.0 L759.0 1095.0 C759.1 1092.5 758.5 1107.5 759.4 1080.0 C760.3 1052.5 762.3 980.0 764.4 930.0 C766.5 880.0 769.7 815.0 772.0 780.0 C774.3 745.0 776.0 741.7 778.1 720.0 C780.2 698.3 782.5 673.3 784.6 650.0 C786.7 626.7 788.2 603.3 790.6 580.0 C793.0 556.7 796.4 535.2 798.9 510.0 C801.4 484.8 804.5 451.2 805.8 429.0 C807.1 406.8 806.9 394.2 806.8 377.0 C806.7 359.8 806.0 343.2 805.0 326.0 C804.0 308.8 802.3 291.3 800.6 274.0 C798.9 256.7 796.5 238.7 794.6 222.0 C792.7 205.3 790.4 183.3 789.4 174.0 C788.4 164.7 788.7 167.3 788.6 166.0Z" fill="url(#twill)"/><path d="M432.6 166.0 C432.6 167.3 433.5 159.0 432.4 174.0 C431.3 189.0 428.1 232.9 426.0 256.1 C423.9 279.4 421.5 296.8 419.7 313.5 C417.9 330.2 416.8 343.2 415.2 356.6 C413.6 370.0 411.6 384.3 410.3 393.9 C409.0 403.5 409.1 408.3 407.4 414.0 C405.7 419.7 403.5 423.5 400.2 428.3 C396.9 433.1 392.8 437.9 387.3 442.7 C381.8 447.5 372.4 453.4 367.2 457.0 C362.0 460.6 360.5 461.7 356.0 464.2 C351.5 466.7 342.7 470.7 340.0 472.0 L340 534 L340.0 534.0 C342.7 535.1 348.7 521.4 356.0 540.7 C363.3 560.0 374.8 614.2 383.7 649.6 C392.6 685.0 403.8 729.9 409.6 753.3 C415.4 776.7 414.5 771.8 418.3 790.0 C422.1 808.2 427.6 838.3 432.2 862.5 C436.8 886.7 441.8 910.8 445.6 935.0 C449.4 959.2 452.3 983.3 455.0 1007.5 C457.7 1031.7 460.6 1065.4 461.8 1080.0 C463.1 1094.6 462.4 1092.5 462.5 1095.0 L759.0 1095.0 C759.1 1092.5 758.5 1107.5 759.4 1080.0 C760.3 1052.5 762.3 980.0 764.4 930.0 C766.5 880.0 769.7 815.0 772.0 780.0 C774.3 745.0 776.0 741.7 778.1 720.0 C780.2 698.3 782.5 673.3 784.6 650.0 C786.7 626.7 788.2 603.3 790.6 580.0 C793.0 556.7 796.4 535.2 798.9 510.0 C801.4 484.8 804.5 451.2 805.8 429.0 C807.1 406.8 806.9 394.2 806.8 377.0 C806.7 359.8 806.0 343.2 805.0 326.0 C804.0 308.8 802.3 291.3 800.6 274.0 C798.9 256.7 796.5 238.7 794.6 222.0 C792.7 205.3 790.4 183.3 789.4 174.0 C788.4 164.7 788.7 167.3 788.6 166.0Z" fill="#000" filter="url(#noise)"/>
<path d="M432.6 166.0 C432.6 167.3 433.5 159.0 432.4 174.0 C431.3 189.0 428.1 232.9 426.0 256.1 C423.9 279.4 421.5 296.8 419.7 313.5 C417.9 330.2 416.8 343.2 415.2 356.6 C413.6 370.0 411.6 384.3 410.3 393.9 C409.0 403.5 409.1 408.3 407.4 414.0 C405.7 419.7 403.5 423.5 400.2 428.3 C396.9 433.1 392.8 437.9 387.3 442.7 C381.8 447.5 372.4 453.4 367.2 457.0 C362.0 460.6 360.5 461.7 356.0 464.2 C351.5 466.7 342.7 470.7 340.0 472.0" fill="none" stroke="#2fe0d0" stroke-width="2.2"/>
<path d="M340.0 534.0 C342.7 535.1 348.7 521.4 356.0 540.7 C363.3 560.0 374.8 614.2 383.7 649.6 C392.6 685.0 403.8 729.9 409.6 753.3 C415.4 776.7 414.5 771.8 418.3 790.0 C422.1 808.2 427.6 838.3 432.2 862.5 C436.8 886.7 441.8 910.8 445.6 935.0 C449.4 959.2 452.3 983.3 455.0 1007.5 C457.7 1031.7 460.6 1065.4 461.8 1080.0 C463.1 1094.6 462.4 1092.5 462.5 1095.0" fill="none" stroke="#2fe0d0" stroke-width="2.2"/>
<path d="M759.0 1095.0 C759.1 1092.5 758.5 1107.5 759.4 1080.0 C760.3 1052.5 762.3 980.0 764.4 930.0 C766.5 880.0 769.7 815.0 772.0 780.0 C774.3 745.0 776.0 741.7 778.1 720.0 C780.2 698.3 782.5 673.3 784.6 650.0 C786.7 626.7 788.2 603.3 790.6 580.0 C793.0 556.7 796.4 535.2 798.9 510.0 C801.4 484.8 804.5 451.2 805.8 429.0 C807.1 406.8 806.9 394.2 806.8 377.0 C806.7 359.8 806.0 343.2 805.0 326.0 C804.0 308.8 802.3 291.3 800.6 274.0 C798.9 256.7 796.5 238.7 794.6 222.0 C792.7 205.3 790.4 183.3 789.4 174.0 C788.4 164.7 788.7 167.3 788.6 166.0" fill="none" stroke="#2fe0d0" stroke-width="2.2"/>
<path d="M891.0 166.0 C891.0 167.3 891.0 159.5 890.8 174.0 C890.6 188.5 889.6 225.9 889.6 253.0 C889.6 280.1 889.6 308.9 890.8 336.7 C892.0 364.5 894.2 392.2 897.0 420.0 C899.8 447.8 903.3 475.5 907.5 503.3 C911.7 531.1 914.2 548.4 922.0 586.7 C929.8 625.0 944.6 686.6 954.4 733.3 C964.2 780.0 973.2 822.2 981.0 866.7 C988.8 911.2 996.3 971.5 1001.0 1000.0 C1005.7 1028.5 1007.2 1029.7 1009.0 1038.0 C1010.8 1046.3 1011.5 1048.0 1012.0 1050.0 L1012 166Z" fill="url(#twill)"/><path d="M891.0 166.0 C891.0 167.3 891.0 159.5 890.8 174.0 C890.6 188.5 889.6 225.9 889.6 253.0 C889.6 280.1 889.6 308.9 890.8 336.7 C892.0 364.5 894.2 392.2 897.0 420.0 C899.8 447.8 903.3 475.5 907.5 503.3 C911.7 531.1 914.2 548.4 922.0 586.7 C929.8 625.0 944.6 686.6 954.4 733.3 C964.2 780.0 973.2 822.2 981.0 866.7 C988.8 911.2 996.3 971.5 1001.0 1000.0 C1005.7 1028.5 1007.2 1029.7 1009.0 1038.0 C1010.8 1046.3 1011.5 1048.0 1012.0 1050.0 L1012 166Z" fill="#000" filter="url(#noise)"/>
<path d="M891.0 166.0 C891.0 167.3 891.0 159.5 890.8 174.0 C890.6 188.5 889.6 225.9 889.6 253.0 C889.6 280.1 889.6 308.9 890.8 336.7 C892.0 364.5 894.2 392.2 897.0 420.0 C899.8 447.8 903.3 475.5 907.5 503.3 C911.7 531.1 914.2 548.4 922.0 586.7 C929.8 625.0 944.6 686.6 954.4 733.3 C964.2 780.0 973.2 822.2 981.0 866.7 C988.8 911.2 996.3 971.5 1001.0 1000.0 C1005.7 1028.5 1007.2 1029.7 1009.0 1038.0 C1010.8 1046.3 1011.5 1048.0 1012.0 1050.0" fill="none" stroke="#3b6fe0" stroke-width="1.3"/>
<rect x="413" y="354.5" width="4.5" height="4.5" fill="#1a6cf0"/>
<path d="M586.7 272 V1080" stroke="#c8607e" stroke-width="1.1"/>
<clipPath id="cpart"><rect x="463" y="606" width="90" height="85"/></clipPath><g clip-path="url(#cpart)"><g transform="translate(485.3 606.5) scale(1.000)"><path d="M0 -6 C-1.8 -8 -4.6 -13 -4 -17 A4 4 0 0 1 4 -17 C4.6 -13 1.8 -8 0 -6Z" fill="#8c5a7c" transform="rotate(18)"/><path d="M0 -6 C-1.8 -8 -4.6 -13 -4 -17 A4 4 0 0 1 4 -17 C4.6 -13 1.8 -8 0 -6Z" fill="#8c5a7c" transform="rotate(54)"/><path d="M0 -6 C-1.8 -8 -4.6 -13 -4 -17 A4 4 0 0 1 4 -17 C4.6 -13 1.8 -8 0 -6Z" fill="#8c5a7c" transform="rotate(90)"/><path d="M0 -6 C-1.8 -8 -4.6 -13 -4 -17 A4 4 0 0 1 4 -17 C4.6 -13 1.8 -8 0 -6Z" fill="#8c5a7c" transform="rotate(126)"/><path d="M0 -6 C-1.8 -8 -4.6 -13 -4 -17 A4 4 0 0 1 4 -17 C4.6 -13 1.8 -8 0 -6Z" fill="#8c5a7c" transform="rotate(162)"/><path d="M0 -6 C-1.8 -8 -4.6 -13 -4 -17 A4 4 0 0 1 4 -17 C4.6 -13 1.8 -8 0 -6Z" fill="#8c5a7c" transform="rotate(198)"/><path d="M0 -6 C-1.8 -8 -4.6 -13 -4 -17 A4 4 0 0 1 4 -17 C4.6 -13 1.8 -8 0 -6Z" fill="#8c5a7c" transform="rotate(234)"/><path d="M0 -6 C-1.8 -8 -4.6 -13 -4 -17 A4 4 0 0 1 4 -17 C4.6 -13 1.8 -8 0 -6Z" fill="#8c5a7c" transform="rotate(270)"/><path d="M0 -6 C-1.8 -8 -4.6 -13 -4 -17 A4 4 0 0 1 4 -17 C4.6 -13 1.8 -8 0 -6Z" fill="#8c5a7c" transform="rotate(306)"/><path d="M0 -6 C-1.8 -8 -4.6 -13 -4 -17 A4 4 0 0 1 4 -17 C4.6 -13 1.8 -8 0 -6Z" fill="#8c5a7c" transform="rotate(342)"/><circle r="5.5" fill="#32334a"/></g><g transform="translate(530.1 606.5) scale(1.000)"><path d="M0 -6 C-1.8 -8 -4.6 -13 -4 -17 A4 4 0 0 1 4 -17 C4.6 -13 1.8 -8 0 -6Z" fill="#8c5a7c" transform="rotate(18)"/><path d="M0 -6 C-1.8 -8 -4.6 -13 -4 -17 A4 4 0 0 1 4 -17 C4.6 -13 1.8 -8 0 -6Z" fill="#8c5a7c" transform="rotate(54)"/><path d="M0 -6 C-1.8 -8 -4.6 -13 -4 -17 A4 4 0 0 1 4 -17 C4.6 -13 1.8 -8 0 -6Z" fill="#8c5a7c" transform="rotate(90)"/><path d="M0 -6 C-1.8 -8 -4.6 -13 -4 -17 A4 4 0 0 1 4 -17 C4.6 -13 1.8 -8 0 -6Z" fill="#8c5a7c" transform="rotate(126)"/><path d="M0 -6 C-1.8 -8 -4.6 -13 -4 -17 A4 4 0 0 1 4 -17 C4.6 -13 1.8 -8 0 -6Z" fill="#8c5a7c" transform="rotate(162)"/><path d="M0 -6 C-1.8 -8 -4.6 -13 -4 -17 A4 4 0 0 1 4 -17 C4.6 -13 1.8 -8 0 -6Z" fill="#8c5a7c" transform="rotate(198)"/><path d="M0 -6 C-1.8 -8 -4.6 -13 -4 -17 A4 4 0 0 1 4 -17 C4.6 -13 1.8 -8 0 -6Z" fill="#8c5a7c" transform="rotate(234)"/><path d="M0 -6 C-1.8 -8 -4.6 -13 -4 -17 A4 4 0 0 1 4 -17 C4.6 -13 1.8 -8 0 -6Z" fill="#8c5a7c" transform="rotate(270)"/><path d="M0 -6 C-1.8 -8 -4.6 -13 -4 -17 A4 4 0 0 1 4 -17 C4.6 -13 1.8 -8 0 -6Z" fill="#8c5a7c" transform="rotate(306)"/><path d="M0 -6 C-1.8 -8 -4.6 -13 -4 -17 A4 4 0 0 1 4 -17 C4.6 -13 1.8 -8 0 -6Z" fill="#8c5a7c" transform="rotate(342)"/><circle r="5.5" fill="#32334a"/></g><g transform="translate(464.0 649.0) scale(1.000)"><path d="M0 -6 C-1.8 -8 -4.6 -13 -4 -17 A4 4 0 0 1 4 -17 C4.6 -13 1.8 -8 0 -6Z" fill="#8c5a7c" transform="rotate(18)"/><path d="M0 -6 C-1.8 -8 -4.6 -13 -4 -17 A4 4 0 0 1 4 -17 C4.6 -13 1.8 -8 0 -6Z" fill="#8c5a7c" transform="rotate(54)"/><path d="M0 -6 C-1.8 -8 -4.6 -13 -4 -17 A4 4 0 0 1 4 -17 C4.6 -13 1.8 -8 0 -6Z" fill="#8c5a7c" transform="rotate(90)"/><path d="M0 -6 C-1.8 -8 -4.6 -13 -4 -17 A4 4 0 0 1 4 -17 C4.6 -13 1.8 -8 0 -6Z" fill="#8c5a7c" transform="rotate(126)"/><path d="M0 -6 C-1.8 -8 -4.6 -13 -4 -17 A4 4 0 0 1 4 -17 C4.6 -13 1.8 -8 0 -6Z" fill="#8c5a7c" transform="rotate(162)"/><path d="M0 -6 C-1.8 -8 -4.6 -13 -4 -17 A4 4 0 0 1 4 -17 C4.6 -13 1.8 -8 0 -6Z" fill="#8c5a7c" transform="rotate(198)"/><path d="M0 -6 C-1.8 -8 -4.6 -13 -4 -17 A4 4 0 0 1 4 -17 C4.6 -13 1.8 -8 0 -6Z" fill="#8c5a7c" transform="rotate(234)"/><path d="M0 -6 C-1.8 -8 -4.6 -13 -4 -17 A4 4 0 0 1 4 -17 C4.6 -13 1.8 -8 0 -6Z" fill="#8c5a7c" transform="rotate(270)"/><path d="M0 -6 C-1.8 -8 -4.6 -13 -4 -17 A4 4 0 0 1 4 -17 C4.6 -13 1.8 -8 0 -6Z" fill="#8c5a7c" transform="rotate(306)"/><path d="M0 -6 C-1.8 -8 -4.6 -13 -4 -17 A4 4 0 0 1 4 -17 C4.6 -13 1.8 -8 0 -6Z" fill="#8c5a7c" transform="rotate(342)"/><circle r="5.5" fill="#32334a"/></g><g transform="translate(507.7 649.0) scale(1.000)"><path d="M0 -6 C-1.8 -8 -4.6 -13 -4 -17 A4 4 0 0 1 4 -17 C4.6 -13 1.8 -8 0 -6Z" fill="#8c5a7c" transform="rotate(18)"/><path d="M0 -6 C-1.8 -8 -4.6 -13 -4 -17 A4 4 0 0 1 4 -17 C4.6 -13 1.8 -8 0 -6Z" fill="#8c5a7c" transform="rotate(54)"/><path d="M0 -6 C-1.8 -8 -4.6 -13 -4 -17 A4 4 0 0 1 4 -17 C4.6 -13 1.8 -8 0 -6Z" fill="#8c5a7c" transform="rotate(90)"/><path d="M0 -6 C-1.8 -8 -4.6 -13 -4 -17 A4 4 0 0 1 4 -17 C4.6 -13 1.8 -8 0 -6Z" fill="#8c5a7c" transform="rotate(126)"/><path d="M0 -6 C-1.8 -8 -4.6 -13 -4 -17 A4 4 0 0 1 4 -17 C4.6 -13 1.8 -8 0 -6Z" fill="#8c5a7c" transform="rotate(162)"/><path d="M0 -6 C-1.8 -8 -4.6 -13 -4 -17 A4 4 0 0 1 4 -17 C4.6 -13 1.8 -8 0 -6Z" fill="#8c5a7c" transform="rotate(198)"/><path d="M0 -6 C-1.8 -8 -4.6 -13 -4 -17 A4 4 0 0 1 4 -17 C4.6 -13 1.8 -8 0 -6Z" fill="#8c5a7c" transform="rotate(234)"/><path d="M0 -6 C-1.8 -8 -4.6 -13 -4 -17 A4 4 0 0 1 4 -17 C4.6 -13 1.8 -8 0 -6Z" fill="#8c5a7c" transform="rotate(270)"/><path d="M0 -6 C-1.8 -8 -4.6 -13 -4 -17 A4 4 0 0 1 4 -17 C4.6 -13 1.8 -8 0 -6Z" fill="#8c5a7c" transform="rotate(306)"/><path d="M0 -6 C-1.8 -8 -4.6 -13 -4 -17 A4 4 0 0 1 4 -17 C4.6 -13 1.8 -8 0 -6Z" fill="#8c5a7c" transform="rotate(342)"/><circle r="5.5" fill="#32334a"/></g><g transform="translate(552.0 649.0) scale(1.000)"><path d="M0 -6 C-1.8 -8 -4.6 -13 -4 -17 A4 4 0 0 1 4 -17 C4.6 -13 1.8 -8 0 -6Z" fill="#8c5a7c" transform="rotate(18)"/><path d="M0 -6 C-1.8 -8 -4.6 -13 -4 -17 A4 4 0 0 1 4 -17 C4.6 -13 1.8 -8 0 -6Z" fill="#8c5a7c" transform="rotate(54)"/><path d="M0 -6 C-1.8 -8 -4.6 -13 -4 -17 A4 4 0 0 1 4 -17 C4.6 -13 1.8 -8 0 -6Z" fill="#8c5a7c" transform="rotate(90)"/><path d="M0 -6 C-1.8 -8 -4.6 -13 -4 -17 A4 4 0 0 1 4 -17 C4.6 -13 1.8 -8 0 -6Z" fill="#8c5a7c" transform="rotate(126)"/><path d="M0 -6 C-1.8 -8 -4.6 -13 -4 -17 A4 4 0 0 1 4 -17 C4.6 -13 1.8 -8 0 -6Z" fill="#8c5a7c" transform="rotate(162)"/><path d="M0 -6 C-1.8 -8 -4.6 -13 -4 -17 A4 4 0 0 1 4 -17 C4.6 -13 1.8 -8 0 -6Z" fill="#8c5a7c" transform="rotate(198)"/><path d="M0 -6 C-1.8 -8 -4.6 -13 -4 -17 A4 4 0 0 1 4 -17 C4.6 -13 1.8 -8 0 -6Z" fill="#8c5a7c" transform="rotate(234)"/><path d="M0 -6 C-1.8 -8 -4.6 -13 -4 -17 A4 4 0 0 1 4 -17 C4.6 -13 1.8 -8 0 -6Z" fill="#8c5a7c" transform="rotate(270)"/><path d="M0 -6 C-1.8 -8 -4.6 -13 -4 -17 A4 4 0 0 1 4 -17 C4.6 -13 1.8 -8 0 -6Z" fill="#8c5a7c" transform="rotate(306)"/><path d="M0 -6 C-1.8 -8 -4.6 -13 -4 -17 A4 4 0 0 1 4 -17 C4.6 -13 1.8 -8 0 -6Z" fill="#8c5a7c" transform="rotate(342)"/><circle r="5.5" fill="#32334a"/></g><g transform="translate(485.3 690.0) scale(1.000)"><path d="M0 -6 C-1.8 -8 -4.6 -13 -4 -17 A4 4 0 0 1 4 -17 C4.6 -13 1.8 -8 0 -6Z" fill="#8c5a7c" transform="rotate(18)"/><path d="M0 -6 C-1.8 -8 -4.6 -13 -4 -17 A4 4 0 0 1 4 -17 C4.6 -13 1.8 -8 0 -6Z" fill="#8c5a7c" transform="rotate(54)"/><path d="M0 -6 C-1.8 -8 -4.6 -13 -4 -17 A4 4 0 0 1 4 -17 C4.6 -13 1.8 -8 0 -6Z" fill="#8c5a7c" transform="rotate(90)"/><path d="M0 -6 C-1.8 -8 -4.6 -13 -4 -17 A4 4 0 0 1 4 -17 C4.6 -13 1.8 -8 0 -6Z" fill="#8c5a7c" transform="rotate(126)"/><path d="M0 -6 C-1.8 -8 -4.6 -13 -4 -17 A4 4 0 0 1 4 -17 C4.6 -13 1.8 -8 0 -6Z" fill="#8c5a7c" transform="rotate(162)"/><path d="M0 -6 C-1.8 -8 -4.6 -13 -4 -17 A4 4 0 0 1 4 -17 C4.6 -13 1.8 -8 0 -6Z" fill="#8c5a7c" transform="rotate(198)"/><path d="M0 -6 C-1.8 -8 -4.6 -13 -4 -17 A4 4 0 0 1 4 -17 C4.6 -13 1.8 -8 0 -6Z" fill="#8c5a7c" transform="rotate(234)"/><path d="M0 -6 C-1.8 -8 -4.6 -13 -4 -17 A4 4 0 0 1 4 -17 C4.6 -13 1.8 -8 0 -6Z" fill="#8c5a7c" transform="rotate(270)"/><path d="M0 -6 C-1.8 -8 -4.6 -13 -4 -17 A4 4 0 0 1 4 -17 C4.6 -13 1.8 -8 0 -6Z" fill="#8c5a7c" transform="rotate(306)"/><path d="M0 -6 C-1.8 -8 -4.6 -13 -4 -17 A4 4 0 0 1 4 -17 C4.6 -13 1.8 -8 0 -6Z" fill="#8c5a7c" transform="rotate(342)"/><circle r="5.5" fill="#32334a"/></g><g transform="translate(530.1 690.0) scale(1.000)"><path d="M0 -6 C-1.8 -8 -4.6 -13 -4 -17 A4 4 0 0 1 4 -17 C4.6 -13 1.8 -8 0 -6Z" fill="#8c5a7c" transform="rotate(18)"/><path d="M0 -6 C-1.8 -8 -4.6 -13 -4 -17 A4 4 0 0 1 4 -17 C4.6 -13 1.8 -8 0 -6Z" fill="#8c5a7c" transform="rotate(54)"/><path d="M0 -6 C-1.8 -8 -4.6 -13 -4 -17 A4 4 0 0 1 4 -17 C4.6 -13 1.8 -8 0 -6Z" fill="#8c5a7c" transform="rotate(90)"/><path d="M0 -6 C-1.8 -8 -4.6 -13 -4 -17 A4 4 0 0 1 4 -17 C4.6 -13 1.8 -8 0 -6Z" fill="#8c5a7c" transform="rotate(126)"/><path d="M0 -6 C-1.8 -8 -4.6 -13 -4 -17 A4 4 0 0 1 4 -17 C4.6 -13 1.8 -8 0 -6Z" fill="#8c5a7c" transform="rotate(162)"/><path d="M0 -6 C-1.8 -8 -4.6 -13 -4 -17 A4 4 0 0 1 4 -17 C4.6 -13 1.8 -8 0 -6Z" fill="#8c5a7c" transform="rotate(198)"/><path d="M0 -6 C-1.8 -8 -4.6 -13 -4 -17 A4 4 0 0 1 4 -17 C4.6 -13 1.8 -8 0 -6Z" fill="#8c5a7c" transform="rotate(234)"/><path d="M0 -6 C-1.8 -8 -4.6 -13 -4 -17 A4 4 0 0 1 4 -17 C4.6 -13 1.8 -8 0 -6Z" fill="#8c5a7c" transform="rotate(270)"/><path d="M0 -6 C-1.8 -8 -4.6 -13 -4 -17 A4 4 0 0 1 4 -17 C4.6 -13 1.8 -8 0 -6Z" fill="#8c5a7c" transform="rotate(306)"/><path d="M0 -6 C-1.8 -8 -4.6 -13 -4 -17 A4 4 0 0 1 4 -17 C4.6 -13 1.8 -8 0 -6Z" fill="#8c5a7c" transform="rotate(342)"/><circle r="5.5" fill="#32334a"/></g></g><rect x="463" y="606.5" width="90" height="84.5" fill="none" stroke="#c46a8a" stroke-width="1.2"/>
<circle cx="568" cy="652.3" r="1.3" fill="#eee"/>
<path d="M570 650.5 L578 644" stroke="#b06080" stroke-width="0.8" stroke-dasharray="2 1.5"/>
<rect x="558.5" y="975.5" width="27" height="20" rx="3" fill="#4e4e4e"/>
<text x="572" y="990" font-family="Liberation Sans" font-size="12" fill="#f2f2f2" text-anchor="middle">471</text>
<path d="M655.8 668 L655.8 682.3 L666.8 676.8Z" fill="#000" stroke="#eee" stroke-width="1.3" stroke-linejoin="round"/>
<path d="M666.5 685 V682.5 Q666.5 681 667.7 681 Q668.6 681 668.6 682 V680.6 Q668.6 679.5 669.6 679.5 Q670.6 679.5 670.6 680.6 V680.2 Q670.6 679 671.6 679 Q672.6 679 672.6 680.2 V681 Q672.6 680 673.6 680 Q674.6 680 674.6 681.2 V689 Q674.6 692 672 693 H669 Q666.5 692 666 689 L665.5 686 Q665.5 685 666.5 685Z" fill="#fff" stroke="#222" stroke-width="0.9"/>
<rect x="667" y="693.2" width="7.5" height="2.8" fill="#000"/>
</g>
<!-- puzzle icon -->
<path d="M366 184 L370 182 L372 185 L375 183 L379 184 L380 188 L377 191 L379 194 L375 196 L372 193 L369 195 L366 192 L367 188Z" fill="#fff"/>
<path d="M364 193 Q366 199 373 199 Q380 199 382 193" fill="none" stroke="#fff" stroke-width="1.2"/>
<path d="M372 197 L375 199 L372 201Z" fill="#fff"/>
</svg>
<!-- 2D toolbar icons -->
<svg class="a" style="left:335px;top:126px" width="673" height="27" viewBox="335 126 673 27">
<path d="M345 133 L340.5 139 L345 145" fill="none" stroke="#777" stroke-width="1.8"/>
<g fill="#3a8ef6"><path d="M356.5 137.5 L361.5 132 L362.5 143Z"/><path d="M363.5 131.5 H369.5 L364 141.5Z"/><path d="M370.5 132 L376 137.5 L366.5 148.5 L363.5 144.5Z"/><path d="M357.5 139 L362.5 144.5 L362.5 140Z"/></g>
<path d="M388 147 L400 135 Q402 132 403.5 134 M394 130 Q396 135 399 133 Q402 130 405 131" fill="none" stroke="#8a8a8a" stroke-width="1.6"/>
<path d="M418 132 H436 V146 H418Z" fill="none" stroke="#9a9a9a" stroke-width="1.2"/><rect x="418" y="134.5" width="15.5" height="11.5" fill="#8f8f8f"/>
<path d="M452 131 L462 130 L467 136 L465 145 L456 147 L449 141 L449 134Z" fill="#9a9a9a"/><path d="M454 134 L461 133 L464 137.5 L462 143 L456 144 L452 140Z" fill="#d8d8d8"/><path d="M455 135 L460.5 134.5 L462.5 138 L461 142 L456.5 143 L453.5 140Z" fill="#9a9a9a"/>
<path d="M483 131 L493 129.5 L497 135 L495 146 L487 148 L480 142 L480 134Z" fill="#3a8ef6"/><path d="M485 134 L492 142" stroke="#fff" stroke-width="1.8"/><circle cx="485" cy="134" r="1.4" fill="#fff"/><circle cx="492" cy="142" r="1.4" fill="#fff"/>
<path d="M516 130 L522 130 L522 148 L516 148 L511 143 L511 135Z" fill="#8f8f8f"/><path d="M523 131 H527 V147 H523" fill="none" stroke="#aaa" stroke-width="1" stroke-dasharray="2 1"/>
<path d="M544 131 L554 129.5 L558 135 L556 146 L548 148 L541 142 L541 134Z" fill="#3a8ef6"/><rect x="548.5" y="136" width="2.2" height="7" fill="#fff"/><circle cx="549.6" cy="133.5" r="1.2" fill="#fff"/>
<path d="M575 131 L586 130 L590 135 L588 145 L578 148 L572 142 L572 134Z" fill="#8f8f8f"/><path d="M575 139 H585 M582 136 L585.5 139 L582 142" fill="none" stroke="#fff" stroke-width="1.5"/>
<g stroke="#a8a8a8" stroke-width="1.1" fill="none"><rect x="602" y="130.5" width="17.5" height="17.5"/><path d="M606.4 130.5 V148 M610.8 130.5 V148 M615.2 130.5 V148 M602 134.9 H619.5 M602 139.3 H619.5 M602 143.7 H619.5"/></g>
<rect x="632" y="129.5" width="18.5" height="4.5" fill="#3a8ef6"/><rect x="632" y="129.5" width="4" height="19" fill="#3a8ef6"/><path d="M635 131.7 H649.5 M633 136 V147" stroke="#cfe2fb" stroke-width="1" stroke-dasharray="1.2 1.5"/>
<g fill="none" stroke="#9a9a9a" stroke-width="1.5"><circle cx="900.5" cy="137" r="5.5"/><path d="M904.5 141 L909 145.5"/><path d="M892 132 V129.5 H894.5 M907 129.5 H909.5 V132 M892 145 V147.5 H894.5" stroke-width="1"/>
<circle cx="934.5" cy="137" r="5"/><path d="M938 141 L942 145.5"/><rect x="926" y="139" width="8" height="8" fill="#efefef"/>
<circle cx="963" cy="137" r="5.5"/><path d="M967 141 L971.5 145.5"/><path d="M960 137 H966 M963 134 V140"/>
<circle cx="993" cy="137" r="5.5"/><path d="M997 141 L1001.5 145.5"/><path d="M990 137 H996"/></g>
</svg>


<!-- 3D VIEW -->

<div class="a" style="left:1013px;top:126px;width:405px;height:27px;background:#efefef;border-bottom:1px solid #cfcfcf"></div>
<svg class="a" style="left:1013px;top:126px" width="405" height="27" viewBox="1013 126 405 27">
<path d="M1024 133 L1019.5 139 L1024 145" fill="none" stroke="#8a8a8a" stroke-width="1.8"/>
<path d="M1040 131 V148 M1044.5 131 V148 M1049 131 V148 M1036.5 134.5 H1053 M1036.5 139 H1053 M1036.5 143.5 H1053" stroke="#999" stroke-width="1.4"/>
<defs><linearGradient id="gsq" x1="0" y1="0" x2="1" y2="1"><stop offset="0" stop-color="#777"/><stop offset="1" stop-color="#e6e6e6"/></linearGradient></defs>
<rect x="1067" y="131" width="16" height="16" fill="url(#gsq)"/>
<rect x="1103.5" y="130" width="5" height="18" fill="#aaa"/><path d="M1104 133 H1106 M1104 136 H1106 M1104 139 H1106 M1104 142 H1106 M1104 145 H1106" stroke="#eee" stroke-width="0.8"/>
<path d="M1127 143 A9 9 0 0 1 1145 143Z" fill="#8f8f8f"/><path d="M1136 142 L1140 136" stroke="#efefef" stroke-width="1.5"/>
<path d="M1158 134 H1162 L1164 131 H1171 L1173 134 H1177 V146 H1158Z" fill="#8f8f8f"/><path d="M1167.5 136 L1169 140 L1167.5 144 L1166 140Z M1163.5 140 L1167.5 138.5 L1171.5 140 L1167.5 141.5Z" fill="#efefef"/>
<text x="1189" y="144" font-family="Liberation Sans" font-size="13" fill="#1a1a1a">Original</text>
<path d="M1241 136 L1244.5 132 L1248 136 M1241 142 L1244.5 146 L1248 142" fill="none" stroke="#333" stroke-width="1.5"/>
<path d="M1352 141 Q1352 132 1360 132 Q1366 132 1367 137 Q1369 142 1366 149" fill="none" stroke="#555" stroke-width="1.6"/><path d="M1353 137 Q1359 135 1364 136" fill="none" stroke="#555" stroke-width="2.2"/><circle cx="1356.5" cy="141" r="0.9" fill="#555"/><circle cx="1361.5" cy="141" r="0.9" fill="#555"/><path d="M1354 143 Q1355 147 1359 147 Q1362 147 1363 144" fill="none" stroke="#555" stroke-width="1.2"/><path d="M1378 136 L1381.5 132 L1385 136 M1378 142 L1381.5 146 L1385 142" fill="none" stroke="#333" stroke-width="1.5"/>
<rect x="1398" y="139" width="9" height="7.5" fill="none" stroke="#444" stroke-width="1.4"/><path d="M1401 136 V132.5 H1411 V141 H1407.5" fill="none" stroke="#444" stroke-width="1.4"/>
</svg>
<svg class="a" style="left:1013px;top:153px" width="405" height="927" viewBox="1013 153 405 927">
<defs>
<linearGradient id="bg3" x1="0" y1="153" x2="0" y2="1080" gradientUnits="userSpaceOnUse">
<stop offset="0" stop-color="#d9d9d9"/><stop offset="0.38" stop-color="#d4d4d4"/><stop offset="0.5" stop-color="#c5c5c5"/><stop offset="0.73" stop-color="#a8a8a8"/><stop offset="0.85" stop-color="#b5b5b5"/><stop offset="1" stop-color="#c9c9c9"/>
</linearGradient>
<radialGradient id="dk"><stop offset="0" stop-color="#000" stop-opacity="0.26"/><stop offset="0.6" stop-color="#000" stop-opacity="0.16"/><stop offset="1" stop-color="#000" stop-opacity="0"/></radialGradient>
<radialGradient id="dk2"><stop offset="0" stop-color="#000" stop-opacity="0.16"/><stop offset="1" stop-color="#000" stop-opacity="0"/></radialGradient>
<radialGradient id="lt"><stop offset="0" stop-color="#fff" stop-opacity="0.10"/><stop offset="1" stop-color="#fff" stop-opacity="0"/></radialGradient>
<linearGradient id="legL" x1="1100" y1="0" x2="1290" y2="0" gradientUnits="userSpaceOnUse"><stop offset="0" stop-color="#505050"/><stop offset="0.25" stop-color="#666"/><stop offset="0.55" stop-color="#767676"/><stop offset="1" stop-color="#6c6c6c"/></linearGradient>
<linearGradient id="legR" x1="1230" y1="0" x2="1350" y2="0" gradientUnits="userSpaceOnUse"><stop offset="0" stop-color="#555"/><stop offset="0.5" stop-color="#636363"/><stop offset="1" stop-color="#5c5c5c"/></linearGradient>
<filter id="noise3" x="1013" y="153" width="405" height="927" filterUnits="userSpaceOnUse"><feTurbulence type="fractalNoise" baseFrequency="0.5" numOctaves="2" seed="11"/><feColorMatrix type="matrix" values="0 0 0 0 0  0 0 0 0 0  0 0 0 0 0  0.4 0 0 0 -0.17"/><feComposite in2="SourceGraphic" operator="in"/></filter>
<linearGradient id="topshade" x1="0" y1="153" x2="0" y2="260" gradientUnits="userSpaceOnUse"><stop offset="0" stop-color="#000" stop-opacity="0.22"/><stop offset="1" stop-color="#000" stop-opacity="0"/></linearGradient>
<linearGradient id="hand" x1="0" y1="0" x2="1" y2="0"><stop offset="0" stop-color="#cfcfcf"/><stop offset="0.5" stop-color="#f0f0f0"/><stop offset="1" stop-color="#d8d8d8"/></linearGradient>
<clipPath id="jk"><path d="M1026 153 C1020 220 1014 290 1013 326 L1013 594 L1042 593 C1046 575 1049 560 1051 548 L1050 601 L1194 599 C1202 596 1205 590 1206 585 L1221 599 L1363 569 L1398 577 C1396 540 1393 500 1388 450 C1385 410 1382 380 1379 358 C1376 340 1370 325 1367 312 C1366 300 1368 280 1368.6 266 C1366 240 1364 200 1360.5 153Z"/></clipPath>
<clipPath id="legs"><path d="M1052.0 596.0 C1053.2 597.0 1057.1 596.8 1059.4 602.0 C1061.7 607.2 1062.5 616.7 1065.9 627.0 C1069.3 637.3 1074.8 651.7 1079.8 664.0 C1084.8 676.3 1090.3 688.7 1095.6 701.0 C1100.8 713.3 1106.5 725.7 1111.3 738.0 C1116.1 750.3 1120.8 765.8 1124.3 775.0 C1127.8 784.2 1129.8 784.7 1132.5 793.3 C1135.2 801.9 1138.1 812.2 1140.8 826.7 C1143.5 841.2 1145.7 865.0 1148.7 880.0 C1151.7 895.0 1155.8 904.7 1158.9 917.0 C1162.0 929.3 1165.2 941.7 1167.2 954.0 C1169.2 966.3 1170.9 978.7 1170.9 991.0 C1170.9 1003.3 1168.7 1013.2 1167.2 1028.0 C1165.7 1042.8 1162.9 1068.8 1161.7 1080.0 C1160.5 1091.2 1160.3 1092.5 1160.0 1095.0 L1299.0 1095.0 C1298.8 1092.5 1300.2 1091.2 1297.8 1080.0 C1295.4 1068.8 1288.5 1045.9 1284.8 1028.0 C1281.1 1010.1 1278.4 988.0 1275.6 972.6 C1272.8 957.2 1270.8 948.0 1268.0 935.6 C1265.2 923.2 1261.4 907.8 1258.9 898.5 C1256.4 889.2 1255.6 889.2 1253.0 880.0 C1250.4 870.8 1246.2 858.0 1243.3 843.0 C1240.4 828.0 1237.8 807.5 1235.4 790.0 C1233.0 772.5 1230.6 752.8 1228.9 738.0 C1227.2 723.2 1225.7 710.7 1225.2 701.0 C1224.7 691.3 1225.1 686.8 1226.0 680.0 C1226.9 673.2 1230.8 668.8 1230.7 660.0 C1230.6 651.2 1227.4 636.7 1225.2 627.0 C1223.0 617.3 1221.2 609.0 1217.8 602.0 C1214.4 595.0 1207.1 587.8 1205.0 585.0 L1052 596Z"/><path d="M1200 590 L1360 566 L1360.0 566.0 C1358.6 569.8 1354.6 574.0 1351.6 589.0 C1348.6 604.0 1345.2 636.8 1342.0 656.0 C1338.8 675.2 1336.4 687.1 1332.4 704.4 C1328.4 721.7 1322.1 739.1 1318.0 760.0 C1313.9 780.9 1311.5 810.0 1308.0 830.0 C1304.5 850.0 1300.2 865.5 1297.0 880.0 C1293.8 894.5 1291.7 904.7 1289.0 917.0 C1286.3 929.3 1283.1 942.0 1281.0 954.0 C1278.9 966.0 1278.0 981.3 1276.5 989.0 C1275.0 996.7 1272.8 998.2 1272.0 1000.0 L1215 720Z"/></clipPath>
</defs>
<rect x="1013" y="153" width="405" height="927" fill="url(#bg3)"/>
<!-- right leg (back) -->
<path d="M1200 590 L1360 566 L1360.0 566.0 C1358.6 569.8 1354.6 574.0 1351.6 589.0 C1348.6 604.0 1345.2 636.8 1342.0 656.0 C1338.8 675.2 1336.4 687.1 1332.4 704.4 C1328.4 721.7 1322.1 739.1 1318.0 760.0 C1313.9 780.9 1311.5 810.0 1308.0 830.0 C1304.5 850.0 1300.2 865.5 1297.0 880.0 C1293.8 894.5 1291.7 904.7 1289.0 917.0 C1286.3 929.3 1283.1 942.0 1281.0 954.0 C1278.9 966.0 1278.0 981.3 1276.5 989.0 C1275.0 996.7 1272.8 998.2 1272.0 1000.0 L1215 720Z" fill="url(#legR)"/>
<!-- left leg (front) -->
<path d="M1052.0 596.0 C1053.2 597.0 1057.1 596.8 1059.4 602.0 C1061.7 607.2 1062.5 616.7 1065.9 627.0 C1069.3 637.3 1074.8 651.7 1079.8 664.0 C1084.8 676.3 1090.3 688.7 1095.6 701.0 C1100.8 713.3 1106.5 725.7 1111.3 738.0 C1116.1 750.3 1120.8 765.8 1124.3 775.0 C1127.8 784.2 1129.8 784.7 1132.5 793.3 C1135.2 801.9 1138.1 812.2 1140.8 826.7 C1143.5 841.2 1145.7 865.0 1148.7 880.0 C1151.7 895.0 1155.8 904.7 1158.9 917.0 C1162.0 929.3 1165.2 941.7 1167.2 954.0 C1169.2 966.3 1170.9 978.7 1170.9 991.0 C1170.9 1003.3 1168.7 1013.2 1167.2 1028.0 C1165.7 1042.8 1162.9 1068.8 1161.7 1080.0 C1160.5 1091.2 1160.3 1092.5 1160.0 1095.0 L1299.0 1095.0 C1298.8 1092.5 1300.2 1091.2 1297.8 1080.0 C1295.4 1068.8 1288.5 1045.9 1284.8 1028.0 C1281.1 1010.1 1278.4 988.0 1275.6 972.6 C1272.8 957.2 1270.8 948.0 1268.0 935.6 C1265.2 923.2 1261.4 907.8 1258.9 898.5 C1256.4 889.2 1255.6 889.2 1253.0 880.0 C1250.4 870.8 1246.2 858.0 1243.3 843.0 C1240.4 828.0 1237.8 807.5 1235.4 790.0 C1233.0 772.5 1230.6 752.8 1228.9 738.0 C1227.2 723.2 1225.7 710.7 1225.2 701.0 C1224.7 691.3 1225.1 686.8 1226.0 680.0 C1226.9 673.2 1230.8 668.8 1230.7 660.0 C1230.6 651.2 1227.4 636.7 1225.2 627.0 C1223.0 617.3 1221.2 609.0 1217.8 602.0 C1214.4 595.0 1207.1 587.8 1205.0 585.0 L1052 596Z" fill="url(#legL)"/>
<g clip-path="url(#legs)">
<ellipse cx="1222" cy="650" rx="22" ry="60" fill="url(#dk)"/>
<ellipse cx="1110" cy="640" rx="40" ry="40" fill="url(#dk2)"/>
<ellipse cx="1200" cy="770" rx="45" ry="70" fill="url(#lt)"/>
<ellipse cx="1290" cy="700" rx="40" ry="60" fill="url(#lt)"/>
<ellipse cx="1150" cy="980" rx="25" ry="90" fill="url(#dk2)"/>
<path d="M1172 1000 C1176 1030 1180 1055 1182 1080" fill="none" stroke="#4a4a4a" stroke-width="2" opacity="0.4"/>
</g>
<g filter="url(#noise3)"><path d="M1200 590 L1360 566 L1360.0 566.0 C1358.6 569.8 1354.6 574.0 1351.6 589.0 C1348.6 604.0 1345.2 636.8 1342.0 656.0 C1338.8 675.2 1336.4 687.1 1332.4 704.4 C1328.4 721.7 1322.1 739.1 1318.0 760.0 C1313.9 780.9 1311.5 810.0 1308.0 830.0 C1304.5 850.0 1300.2 865.5 1297.0 880.0 C1293.8 894.5 1291.7 904.7 1289.0 917.0 C1286.3 929.3 1283.1 942.0 1281.0 954.0 C1278.9 966.0 1278.0 981.3 1276.5 989.0 C1275.0 996.7 1272.8 998.2 1272.0 1000.0 L1215 720Z" fill="#000"/><path d="M1052.0 596.0 C1053.2 597.0 1057.1 596.8 1059.4 602.0 C1061.7 607.2 1062.5 616.7 1065.9 627.0 C1069.3 637.3 1074.8 651.7 1079.8 664.0 C1084.8 676.3 1090.3 688.7 1095.6 701.0 C1100.8 713.3 1106.5 725.7 1111.3 738.0 C1116.1 750.3 1120.8 765.8 1124.3 775.0 C1127.8 784.2 1129.8 784.7 1132.5 793.3 C1135.2 801.9 1138.1 812.2 1140.8 826.7 C1143.5 841.2 1145.7 865.0 1148.7 880.0 C1151.7 895.0 1155.8 904.7 1158.9 917.0 C1162.0 929.3 1165.2 941.7 1167.2 954.0 C1169.2 966.3 1170.9 978.7 1170.9 991.0 C1170.9 1003.3 1168.7 1013.2 1167.2 1028.0 C1165.7 1042.8 1162.9 1068.8 1161.7 1080.0 C1160.5 1091.2 1160.3 1092.5 1160.0 1095.0 L1299.0 1095.0 C1298.8 1092.5 1300.2 1091.2 1297.8 1080.0 C1295.4 1068.8 1288.5 1045.9 1284.8 1028.0 C1281.1 1010.1 1278.4 988.0 1275.6 972.6 C1272.8 957.2 1270.8 948.0 1268.0 935.6 C1265.2 923.2 1261.4 907.8 1258.9 898.5 C1256.4 889.2 1255.6 889.2 1253.0 880.0 C1250.4 870.8 1246.2 858.0 1243.3 843.0 C1240.4 828.0 1237.8 807.5 1235.4 790.0 C1233.0 772.5 1230.6 752.8 1228.9 738.0 C1227.2 723.2 1225.7 710.7 1225.2 701.0 C1224.7 691.3 1225.1 686.8 1226.0 680.0 C1226.9 673.2 1230.8 668.8 1230.7 660.0 C1230.6 651.2 1227.4 636.7 1225.2 627.0 C1223.0 617.3 1221.2 609.0 1217.8 602.0 C1214.4 595.0 1207.1 587.8 1205.0 585.0 L1052 596Z" fill="#000"/></g>
<path d="M1190 578 L1222 578 L1222 602 L1190 602Z" fill="#585858"/>
<!-- jacket -->
<path d="M1026 153 C1020 220 1014 290 1013 326 L1013 594 L1042 593 C1046 575 1049 560 1051 548 L1050 601 L1194 599 C1202 596 1205 590 1206 585 L1221 599 L1363 569 L1398 577 C1396 540 1393 500 1388 450 C1385 410 1382 380 1379 358 C1376 340 1370 325 1367 312 C1366 300 1368 280 1368.6 266 C1366 240 1364 200 1360.5 153Z" fill="#666666"/>
<g clip-path="url(#jk)">
<!-- sleeves -->
<path d="M1026 153 L1056 153 C1062 200 1068 250 1069 278 C1067 300 1065 320 1065 334 C1070 342 1076 347 1080 352 C1072 390 1066 420 1060 456 C1054 500 1048 550 1043 594 L1013 594 L1013 326Z" fill="#606060"/>
<ellipse cx="1040" cy="230" rx="25" ry="70" fill="url(#lt)"/>
<ellipse cx="1035" cy="470" rx="22" ry="80" fill="url(#lt)"/>
<path d="M1333 153 C1322 200 1316 240 1315.8 261 C1313 290 1311 310 1311.4 326 C1309 340 1307 350 1307 356 C1312 390 1318 415 1322 430 C1330 460 1340 490 1346 508 C1354 530 1362 550 1368 564 L1398 577 C1396 540 1393 500 1388 450 C1385 410 1382 380 1379 358 C1376 340 1370 325 1367 312 C1366 300 1368 280 1368.6 266 C1366 240 1364 200 1360.5 153Z" fill="#666"/>
<ellipse cx="1345" cy="230" rx="22" ry="60" fill="url(#lt)"/>
<ellipse cx="1370" cy="470" rx="20" ry="80" fill="url(#lt)"/>
<!-- shading torso -->
<rect x="1013" y="153" width="405" height="110" fill="url(#topshade)"/>
<ellipse cx="1076" cy="315" rx="16" ry="45" fill="url(#dk)"/>
<ellipse cx="1125" cy="345" rx="45" ry="20" fill="url(#dk)" transform="rotate(35 1125 345)"/>
<ellipse cx="1095" cy="335" rx="32" ry="24" fill="url(#dk2)"/>
<ellipse cx="1140" cy="366" rx="70" ry="24" fill="url(#dk)"/>
<ellipse cx="1299" cy="322" rx="18" ry="30" fill="url(#dk)"/><ellipse cx="1280" cy="345" rx="35" ry="35" fill="url(#dk2)"/>
<ellipse cx="1075" cy="470" rx="22" ry="60" fill="url(#dk2)"/>
<ellipse cx="1130" cy="525" rx="90" ry="26" fill="url(#dk2)"/>
<ellipse cx="1285" cy="495" rx="65" ry="26" fill="url(#dk2)"/>
<ellipse cx="1160" cy="250" rx="55" ry="55" fill="url(#lt)"/>
<ellipse cx="1260" cy="250" rx="50" ry="50" fill="url(#lt)"/>
<ellipse cx="1165" cy="440" rx="45" ry="35" fill="url(#lt)"/>
<ellipse cx="1270" cy="580" rx="70" ry="15" fill="url(#dk2)"/>
<!-- shirt & lapels -->
<path d="M1167.8 153 L1184.7 203 L1196.4 247.4 L1199 247.4 L1210.7 203 L1221 153Z" fill="#686868"/>
<path d="M1117 153 L1140.4 184.9 L1161.3 210.9 L1182 237 L1205.5 273.4 L1196.4 247.4 L1184.7 203 L1167.8 153Z" fill="#707070"/>
<path d="M1270.6 153 L1249.8 179.7 L1231.6 205.7 L1213.3 234.4 L1199 259 L1199 247.4 L1210.7 203 L1221 153Z" fill="#717171"/>
<path d="M1117 153 L1140.4 184.9 L1161.3 210.9 L1182 237 L1205.5 273.4" fill="none" stroke="#474747" stroke-width="1.3"/>
<path d="M1270.6 153 L1249.8 179.7 L1231.6 205.7 L1213.3 234.4 L1199 259" fill="none" stroke="#4a4a4a" stroke-width="1.2"/>
<path d="M1167.8 153 L1184.7 203 L1196.4 247.4 M1221 153 L1210.7 203 L1199 247.4" fill="none" stroke="#5a5a5a" stroke-width="1"/>
<!-- front edge -->
<path d="M1205.5 273.4 C1208 285 1211 295 1212 304 C1214 360 1214 400 1214 456 C1214 500 1213 540 1212 577 C1210 590 1204 596 1194.6 598.5 L1050 601" fill="none" stroke="#4a4a4a" stroke-width="1.3"/>
<path d="M1206 585 L1221 599 L1363 569" fill="none" stroke="#4e4e4e" stroke-width="1.1"/>
<!-- sleeve seams -->
<path d="M1056 153 C1062 200 1068 250 1069 278 C1067 300 1065 320 1065 334" fill="none" stroke="#4a4a4a" stroke-width="1.2"/>
<path d="M1080 352 C1072 390 1066 420 1060 456 C1054 500 1048 550 1043 594" fill="none" stroke="#505050" stroke-width="1"/>
<path d="M1333 153 C1322 200 1316 240 1315.8 261 C1313 290 1311 310 1311.4 326" fill="none" stroke="#4c4c4c" stroke-width="1.1"/>
<path d="M1307 356 C1312 390 1318 415 1322 430 C1330 460 1340 490 1346 508 C1354 530 1362 550 1368 564" fill="none" stroke="#3e3e3e" stroke-width="2"/>
<path d="M1313 350 C1318 385 1324 412 1328 428 C1336 458 1346 488 1352 506" fill="none" stroke="#7a7a7a" stroke-width="0.8"/>
<path d="M1307 356 C1311 380 1316 400 1321 420 C1326 440 1334 465 1342 490 C1350 515 1357 535 1362 552" fill="none" stroke="#3a3a3a" stroke-width="5" opacity="0.35"/>
<!-- princess seam -->
<path d="M1082 272 C1090 282 1098 295 1104 310 C1108 325 1110 340 1111 352 C1114 380 1120 400 1128 420" fill="none" stroke="#7b7b7b" stroke-width="1"/>
<path d="M1081 271 L1072 264" stroke="#7b7b7b" stroke-width="1"/>
<!-- pocket flaps -->
<path d="M1069 410 L1121 410 L1110 447 L1060.6 451Z" fill="#646464" stroke="#7c7c7c" stroke-width="1.1"/>
<path d="M1272.5 408 L1318 393 L1324.4 436 L1290 440.6Z" fill="#666" stroke="#7c7c7c" stroke-width="1.1"/>
<!-- buttons -->
<circle cx="1194.5" cy="297" r="7" fill="#686868" stroke="#858585" stroke-width="1.3"/><circle cx="1194.5" cy="297" r="2.5" fill="none" stroke="#858585" stroke-width="0.8"/>
<circle cx="1196.3" cy="415.2" r="7" fill="#686868" stroke="#858585" stroke-width="1.3"/><path d="M1193 416 H1199" stroke="#999" stroke-width="0.9"/>
<!-- dashes -->
<path d="M1142.6 450.5 H1161" stroke="#1fa6a0" stroke-width="2"/><path d="M1161 450.5 H1174 M1185 450.5 H1201.6" stroke="#8a8a8a" stroke-width="1.5"/>
<path d="M1215.2 494 V503" stroke="#1fa6a0" stroke-width="1.5"/>
</g>
<g filter="url(#noise3)"><path d="M1026 153 C1020 220 1014 290 1013 326 L1013 594 L1042 593 C1046 575 1049 560 1051 548 L1050 601 L1194 599 C1202 596 1205 590 1206 585 L1221 599 L1363 569 L1398 577 C1396 540 1393 500 1388 450 C1385 410 1382 380 1379 358 C1376 340 1370 325 1367 312 C1366 300 1368 280 1368.6 266 C1366 240 1364 200 1360.5 153Z" fill="#000"/></g>
<!-- armpit gaps -->

<path d="M1304 344 L1310 342 L1309.5 356 L1305 355Z" fill="#bdbdbd"/>
<path d="M1052 512 L1055 512 L1053 550 L1051 548Z" fill="#cfcfcf"/>
<!-- hands -->
<linearGradient id="handL" x1="1013" y1="0" x2="1058" y2="0" gradientUnits="userSpaceOnUse"><stop offset="0" stop-color="#d2d2d2"/><stop offset="0.6" stop-color="#efefef"/><stop offset="1" stop-color="#e2e2e2"/></linearGradient>
<linearGradient id="handR" x1="1330" y1="0" x2="1397" y2="0" gradientUnits="userSpaceOnUse"><stop offset="0" stop-color="#dcdcdc"/><stop offset="0.5" stop-color="#f2f2f2"/><stop offset="1" stop-color="#d6d6d6"/></linearGradient>
<path d="M1040.5 593.0 C1040.9 595.8 1042.5 603.7 1043.0 610.0 C1043.5 616.3 1043.7 625.2 1043.6 631.0 C1043.5 636.8 1043.1 640.0 1042.6 645.0 C1042.1 650.0 1040.8 658.3 1040.5 661.0 L1040.5 661.0 C1041.6 662.0 1044.1 664.4 1047.0 667.0 C1049.9 669.6 1057.6 674.6 1057.9 676.7 C1058.2 678.8 1052.8 678.9 1048.7 679.8 C1044.6 680.6 1038.2 682.4 1033.4 681.8 C1028.6 681.2 1023.4 678.0 1020.0 676.0 C1016.6 674.0 1014.2 670.7 1013.0 669.6 L1013 593Z" fill="url(#handL)"/>
<path d="M1027 633 C1030 642 1034 652 1039 661 C1035 661 1031 656 1029 649 C1027 643 1026 638 1027 633Z" fill="#b8b8b8"/>
<path d="M1016 640 C1024 656 1036 668 1054 677" fill="none" stroke="#c4c4c4" stroke-width="1.2"/>
<path d="M1022 676 C1032 680 1044 680 1056 678" fill="none" stroke="#8a8a8a" stroke-width="1"/>
<path d="M1361.0 569.0 C1366.9 570.3 1391.2 572.7 1396.4 577.0 C1401.6 581.3 1394.1 587.1 1392.2 594.7 C1390.3 602.3 1388.1 614.4 1385.3 622.5 C1382.5 630.6 1379.5 636.8 1375.6 643.3 C1371.7 649.8 1366.3 654.9 1361.7 661.4 C1357.1 667.9 1352.4 675.0 1347.8 682.2 C1343.2 689.4 1336.9 700.7 1333.9 704.4 C1330.9 708.1 1330.4 704.4 1329.7 704.4 L1329.7 704.4 C1329.9 701.2 1329.3 692.4 1331.0 685.0 C1332.7 677.6 1337.2 667.9 1340.0 660.0 C1342.8 652.1 1347.4 643.6 1347.8 637.8 C1348.2 632.0 1343.4 629.0 1342.2 625.3 C1341.0 621.6 1339.9 619.1 1340.8 615.6 C1341.7 612.1 1345.3 609.0 1347.8 604.4 C1350.3 599.8 1353.8 593.7 1356.0 587.8 C1358.2 581.9 1360.2 572.1 1361.0 569.0Z" fill="url(#handR)"/>
<path d="M1347.8 604.4 C1356 600 1365 595 1372 588" fill="none" stroke="#c8c8c8" stroke-width="1.5"/>
<path d="M1342 625 C1345 628 1348 632 1350 636" fill="none" stroke="#a8a8a8" stroke-width="1.2"/>
<path d="M1337 695 C1348 675 1358 660 1366 645" fill="none" stroke="#c0c0c0" stroke-width="1"/>
<!-- cyan seams on pants -->
<path d="M1065.0 602.0 C1065.8 605.5 1068.5 619.1 1069.6 623.3 C1070.7 627.5 1068.9 620.2 1071.5 627.0 C1074.1 633.8 1080.5 651.7 1085.4 664.0 C1090.3 676.3 1095.9 688.7 1101.0 701.0 C1106.1 713.3 1111.0 725.7 1116.0 738.0 C1121.0 750.3 1127.3 766.3 1130.7 775.0 C1134.1 783.7 1131.9 772.5 1136.3 790.0 C1140.7 807.5 1152.3 858.8 1157.0 880.0 C1161.7 901.2 1161.9 904.7 1164.4 917.0 C1166.9 929.3 1169.9 941.7 1171.9 954.0 C1173.9 966.3 1174.8 978.7 1176.5 991.0 C1178.2 1003.3 1180.3 1015.7 1182.0 1028.0 C1183.7 1040.3 1185.6 1056.3 1186.7 1065.0 C1187.8 1073.7 1188.1 1075.8 1188.5 1080.0 C1188.9 1084.2 1188.9 1088.3 1189.0 1090.0" fill="none" stroke="#22b3a8" stroke-width="1.5"/>
<path d="M1225.5 672 C1226 690 1227 710 1228.5 735" fill="none" stroke="#22b3a8" stroke-width="1.3"/>
<path d="M1246.7 836.7 L1256.7 893.3" fill="none" stroke="#22b3a8" stroke-width="1.2"/>
<path d="M1266.7 938 L1268.5 950" fill="none" stroke="#22b3a8" stroke-width="1"/>
<path d="M1218 608 C1222 620 1224 628 1224 635" fill="none" stroke="#22b3a8" stroke-width="1.3"/>


<path d="M1178.3 1055 L1173.7 1082" stroke="#22b3a8" stroke-width="1.2"/>
<path d="M1348 640 C1344 650 1340 660 1338 668" fill="none" stroke="#22b3a8" stroke-width="1.2"/>
<!-- artwork on pants -->
<clipPath id="cpart3"><path d="M1226 689 L1273 689 L1272 729 L1226 729Z"/></clipPath><g clip-path="url(#cpart3)" opacity="0.9"><g transform="translate(1237.0 689.0) scale(0.500)"><path d="M0 -6 C-1.8 -8 -4.6 -13 -4 -17 A4 4 0 0 1 4 -17 C4.6 -13 1.8 -8 0 -6Z" fill="#a06f8e" transform="rotate(18)"/><path d="M0 -6 C-1.8 -8 -4.6 -13 -4 -17 A4 4 0 0 1 4 -17 C4.6 -13 1.8 -8 0 -6Z" fill="#a06f8e" transform="rotate(54)"/><path d="M0 -6 C-1.8 -8 -4.6 -13 -4 -17 A4 4 0 0 1 4 -17 C4.6 -13 1.8 -8 0 -6Z" fill="#a06f8e" transform="rotate(90)"/><path d="M0 -6 C-1.8 -8 -4.6 -13 -4 -17 A4 4 0 0 1 4 -17 C4.6 -13 1.8 -8 0 -6Z" fill="#a06f8e" transform="rotate(126)"/><path d="M0 -6 C-1.8 -8 -4.6 -13 -4 -17 A4 4 0 0 1 4 -17 C4.6 -13 1.8 -8 0 -6Z" fill="#a06f8e" transform="rotate(162)"/><path d="M0 -6 C-1.8 -8 -4.6 -13 -4 -17 A4 4 0 0 1 4 -17 C4.6 -13 1.8 -8 0 -6Z" fill="#a06f8e" transform="rotate(198)"/><path d="M0 -6 C-1.8 -8 -4.6 -13 -4 -17 A4 4 0 0 1 4 -17 C4.6 -13 1.8 -8 0 -6Z" fill="#a06f8e" transform="rotate(234)"/><path d="M0 -6 C-1.8 -8 -4.6 -13 -4 -17 A4 4 0 0 1 4 -17 C4.6 -13 1.8 -8 0 -6Z" fill="#a06f8e" transform="rotate(270)"/><path d="M0 -6 C-1.8 -8 -4.6 -13 -4 -17 A4 4 0 0 1 4 -17 C4.6 -13 1.8 -8 0 -6Z" fill="#a06f8e" transform="rotate(306)"/><path d="M0 -6 C-1.8 -8 -4.6 -13 -4 -17 A4 4 0 0 1 4 -17 C4.6 -13 1.8 -8 0 -6Z" fill="#a06f8e" transform="rotate(342)"/><circle r="5.5" fill="#2f3046"/></g><g transform="translate(1259.0 689.0) scale(0.500)"><path d="M0 -6 C-1.8 -8 -4.6 -13 -4 -17 A4 4 0 0 1 4 -17 C4.6 -13 1.8 -8 0 -6Z" fill="#a06f8e" transform="rotate(18)"/><path d="M0 -6 C-1.8 -8 -4.6 -13 -4 -17 A4 4 0 0 1 4 -17 C4.6 -13 1.8 -8 0 -6Z" fill="#a06f8e" transform="rotate(54)"/><path d="M0 -6 C-1.8 -8 -4.6 -13 -4 -17 A4 4 0 0 1 4 -17 C4.6 -13 1.8 -8 0 -6Z" fill="#a06f8e" transform="rotate(90)"/><path d="M0 -6 C-1.8 -8 -4.6 -13 -4 -17 A4 4 0 0 1 4 -17 C4.6 -13 1.8 -8 0 -6Z" fill="#a06f8e" transform="rotate(126)"/><path d="M0 -6 C-1.8 -8 -4.6 -13 -4 -17 A4 4 0 0 1 4 -17 C4.6 -13 1.8 -8 0 -6Z" fill="#a06f8e" transform="rotate(162)"/><path d="M0 -6 C-1.8 -8 -4.6 -13 -4 -17 A4 4 0 0 1 4 -17 C4.6 -13 1.8 -8 0 -6Z" fill="#a06f8e" transform="rotate(198)"/><path d="M0 -6 C-1.8 -8 -4.6 -13 -4 -17 A4 4 0 0 1 4 -17 C4.6 -13 1.8 -8 0 -6Z" fill="#a06f8e" transform="rotate(234)"/><path d="M0 -6 C-1.8 -8 -4.6 -13 -4 -17 A4 4 0 0 1 4 -17 C4.6 -13 1.8 -8 0 -6Z" fill="#a06f8e" transform="rotate(270)"/><path d="M0 -6 C-1.8 -8 -4.6 -13 -4 -17 A4 4 0 0 1 4 -17 C4.6 -13 1.8 -8 0 -6Z" fill="#a06f8e" transform="rotate(306)"/><path d="M0 -6 C-1.8 -8 -4.6 -13 -4 -17 A4 4 0 0 1 4 -17 C4.6 -13 1.8 -8 0 -6Z" fill="#a06f8e" transform="rotate(342)"/><circle r="5.5" fill="#2f3046"/></g><g transform="translate(1226.0 709.0) scale(0.500)"><path d="M0 -6 C-1.8 -8 -4.6 -13 -4 -17 A4 4 0 0 1 4 -17 C4.6 -13 1.8 -8 0 -6Z" fill="#a06f8e" transform="rotate(18)"/><path d="M0 -6 C-1.8 -8 -4.6 -13 -4 -17 A4 4 0 0 1 4 -17 C4.6 -13 1.8 -8 0 -6Z" fill="#a06f8e" transform="rotate(54)"/><path d="M0 -6 C-1.8 -8 -4.6 -13 -4 -17 A4 4 0 0 1 4 -17 C4.6 -13 1.8 -8 0 -6Z" fill="#a06f8e" transform="rotate(90)"/><path d="M0 -6 C-1.8 -8 -4.6 -13 -4 -17 A4 4 0 0 1 4 -17 C4.6 -13 1.8 -8 0 -6Z" fill="#a06f8e" transform="rotate(126)"/><path d="M0 -6 C-1.8 -8 -4.6 -13 -4 -17 A4 4 0 0 1 4 -17 C4.6 -13 1.8 -8 0 -6Z" fill="#a06f8e" transform="rotate(162)"/><path d="M0 -6 C-1.8 -8 -4.6 -13 -4 -17 A4 4 0 0 1 4 -17 C4.6 -13 1.8 -8 0 -6Z" fill="#a06f8e" transform="rotate(198)"/><path d="M0 -6 C-1.8 -8 -4.6 -13 -4 -17 A4 4 0 0 1 4 -17 C4.6 -13 1.8 -8 0 -6Z" fill="#a06f8e" transform="rotate(234)"/><path d="M0 -6 C-1.8 -8 -4.6 -13 -4 -17 A4 4 0 0 1 4 -17 C4.6 -13 1.8 -8 0 -6Z" fill="#a06f8e" transform="rotate(270)"/><path d="M0 -6 C-1.8 -8 -4.6 -13 -4 -17 A4 4 0 0 1 4 -17 C4.6 -13 1.8 -8 0 -6Z" fill="#a06f8e" transform="rotate(306)"/><path d="M0 -6 C-1.8 -8 -4.6 -13 -4 -17 A4 4 0 0 1 4 -17 C4.6 -13 1.8 -8 0 -6Z" fill="#a06f8e" transform="rotate(342)"/><circle r="5.5" fill="#2f3046"/></g><g transform="translate(1248.0 709.0) scale(0.500)"><path d="M0 -6 C-1.8 -8 -4.6 -13 -4 -17 A4 4 0 0 1 4 -17 C4.6 -13 1.8 -8 0 -6Z" fill="#a06f8e" transform="rotate(18)"/><path d="M0 -6 C-1.8 -8 -4.6 -13 -4 -17 A4 4 0 0 1 4 -17 C4.6 -13 1.8 -8 0 -6Z" fill="#a06f8e" transform="rotate(54)"/><path d="M0 -6 C-1.8 -8 -4.6 -13 -4 -17 A4 4 0 0 1 4 -17 C4.6 -13 1.8 -8 0 -6Z" fill="#a06f8e" transform="rotate(90)"/><path d="M0 -6 C-1.8 -8 -4.6 -13 -4 -17 A4 4 0 0 1 4 -17 C4.6 -13 1.8 -8 0 -6Z" fill="#a06f8e" transform="rotate(126)"/><path d="M0 -6 C-1.8 -8 -4.6 -13 -4 -17 A4 4 0 0 1 4 -17 C4.6 -13 1.8 -8 0 -6Z" fill="#a06f8e" transform="rotate(162)"/><path d="M0 -6 C-1.8 -8 -4.6 -13 -4 -17 A4 4 0 0 1 4 -17 C4.6 -13 1.8 -8 0 -6Z" fill="#a06f8e" transform="rotate(198)"/><path d="M0 -6 C-1.8 -8 -4.6 -13 -4 -17 A4 4 0 0 1 4 -17 C4.6 -13 1.8 -8 0 -6Z" fill="#a06f8e" transform="rotate(234)"/><path d="M0 -6 C-1.8 -8 -4.6 -13 -4 -17 A4 4 0 0 1 4 -17 C4.6 -13 1.8 -8 0 -6Z" fill="#a06f8e" transform="rotate(270)"/><path d="M0 -6 C-1.8 -8 -4.6 -13 -4 -17 A4 4 0 0 1 4 -17 C4.6 -13 1.8 -8 0 -6Z" fill="#a06f8e" transform="rotate(306)"/><path d="M0 -6 C-1.8 -8 -4.6 -13 -4 -17 A4 4 0 0 1 4 -17 C4.6 -13 1.8 -8 0 -6Z" fill="#a06f8e" transform="rotate(342)"/><circle r="5.5" fill="#2f3046"/></g><g transform="translate(1270.0 709.0) scale(0.500)"><path d="M0 -6 C-1.8 -8 -4.6 -13 -4 -17 A4 4 0 0 1 4 -17 C4.6 -13 1.8 -8 0 -6Z" fill="#a06f8e" transform="rotate(18)"/><path d="M0 -6 C-1.8 -8 -4.6 -13 -4 -17 A4 4 0 0 1 4 -17 C4.6 -13 1.8 -8 0 -6Z" fill="#a06f8e" transform="rotate(54)"/><path d="M0 -6 C-1.8 -8 -4.6 -13 -4 -17 A4 4 0 0 1 4 -17 C4.6 -13 1.8 -8 0 -6Z" fill="#a06f8e" transform="rotate(90)"/><path d="M0 -6 C-1.8 -8 -4.6 -13 -4 -17 A4 4 0 0 1 4 -17 C4.6 -13 1.8 -8 0 -6Z" fill="#a06f8e" transform="rotate(126)"/><path d="M0 -6 C-1.8 -8 -4.6 -13 -4 -17 A4 4 0 0 1 4 -17 C4.6 -13 1.8 -8 0 -6Z" fill="#a06f8e" transform="rotate(162)"/><path d="M0 -6 C-1.8 -8 -4.6 -13 -4 -17 A4 4 0 0 1 4 -17 C4.6 -13 1.8 -8 0 -6Z" fill="#a06f8e" transform="rotate(198)"/><path d="M0 -6 C-1.8 -8 -4.6 -13 -4 -17 A4 4 0 0 1 4 -17 C4.6 -13 1.8 -8 0 -6Z" fill="#a06f8e" transform="rotate(234)"/><path d="M0 -6 C-1.8 -8 -4.6 -13 -4 -17 A4 4 0 0 1 4 -17 C4.6 -13 1.8 -8 0 -6Z" fill="#a06f8e" transform="rotate(270)"/><path d="M0 -6 C-1.8 -8 -4.6 -13 -4 -17 A4 4 0 0 1 4 -17 C4.6 -13 1.8 -8 0 -6Z" fill="#a06f8e" transform="rotate(306)"/><path d="M0 -6 C-1.8 -8 -4.6 -13 -4 -17 A4 4 0 0 1 4 -17 C4.6 -13 1.8 -8 0 -6Z" fill="#a06f8e" transform="rotate(342)"/><circle r="5.5" fill="#2f3046"/></g><g transform="translate(1237.0 729.0) scale(0.500)"><path d="M0 -6 C-1.8 -8 -4.6 -13 -4 -17 A4 4 0 0 1 4 -17 C4.6 -13 1.8 -8 0 -6Z" fill="#a06f8e" transform="rotate(18)"/><path d="M0 -6 C-1.8 -8 -4.6 -13 -4 -17 A4 4 0 0 1 4 -17 C4.6 -13 1.8 -8 0 -6Z" fill="#a06f8e" transform="rotate(54)"/><path d="M0 -6 C-1.8 -8 -4.6 -13 -4 -17 A4 4 0 0 1 4 -17 C4.6 -13 1.8 -8 0 -6Z" fill="#a06f8e" transform="rotate(90)"/><path d="M0 -6 C-1.8 -8 -4.6 -13 -4 -17 A4 4 0 0 1 4 -17 C4.6 -13 1.8 -8 0 -6Z" fill="#a06f8e" transform="rotate(126)"/><path d="M0 -6 C-1.8 -8 -4.6 -13 -4 -17 A4 4 0 0 1 4 -17 C4.6 -13 1.8 -8 0 -6Z" fill="#a06f8e" transform="rotate(162)"/><path d="M0 -6 C-1.8 -8 -4.6 -13 -4 -17 A4 4 0 0 1 4 -17 C4.6 -13 1.8 -8 0 -6Z" fill="#a06f8e" transform="rotate(198)"/><path d="M0 -6 C-1.8 -8 -4.6 -13 -4 -17 A4 4 0 0 1 4 -17 C4.6 -13 1.8 -8 0 -6Z" fill="#a06f8e" transform="rotate(234)"/><path d="M0 -6 C-1.8 -8 -4.6 -13 -4 -17 A4 4 0 0 1 4 -17 C4.6 -13 1.8 -8 0 -6Z" fill="#a06f8e" transform="rotate(270)"/><path d="M0 -6 C-1.8 -8 -4.6 -13 -4 -17 A4 4 0 0 1 4 -17 C4.6 -13 1.8 -8 0 -6Z" fill="#a06f8e" transform="rotate(306)"/><path d="M0 -6 C-1.8 -8 -4.6 -13 -4 -17 A4 4 0 0 1 4 -17 C4.6 -13 1.8 -8 0 -6Z" fill="#a06f8e" transform="rotate(342)"/><circle r="5.5" fill="#2f3046"/></g><g transform="translate(1259.0 729.0) scale(0.500)"><path d="M0 -6 C-1.8 -8 -4.6 -13 -4 -17 A4 4 0 0 1 4 -17 C4.6 -13 1.8 -8 0 -6Z" fill="#a06f8e" transform="rotate(18)"/><path d="M0 -6 C-1.8 -8 -4.6 -13 -4 -17 A4 4 0 0 1 4 -17 C4.6 -13 1.8 -8 0 -6Z" fill="#a06f8e" transform="rotate(54)"/><path d="M0 -6 C-1.8 -8 -4.6 -13 -4 -17 A4 4 0 0 1 4 -17 C4.6 -13 1.8 -8 0 -6Z" fill="#a06f8e" transform="rotate(90)"/><path d="M0 -6 C-1.8 -8 -4.6 -13 -4 -17 A4 4 0 0 1 4 -17 C4.6 -13 1.8 -8 0 -6Z" fill="#a06f8e" transform="rotate(126)"/><path d="M0 -6 C-1.8 -8 -4.6 -13 -4 -17 A4 4 0 0 1 4 -17 C4.6 -13 1.8 -8 0 -6Z" fill="#a06f8e" transform="rotate(162)"/><path d="M0 -6 C-1.8 -8 -4.6 -13 -4 -17 A4 4 0 0 1 4 -17 C4.6 -13 1.8 -8 0 -6Z" fill="#a06f8e" transform="rotate(198)"/><path d="M0 -6 C-1.8 -8 -4.6 -13 -4 -17 A4 4 0 0 1 4 -17 C4.6 -13 1.8 -8 0 -6Z" fill="#a06f8e" transform="rotate(234)"/><path d="M0 -6 C-1.8 -8 -4.6 -13 -4 -17 A4 4 0 0 1 4 -17 C4.6 -13 1.8 -8 0 -6Z" fill="#a06f8e" transform="rotate(270)"/><path d="M0 -6 C-1.8 -8 -4.6 -13 -4 -17 A4 4 0 0 1 4 -17 C4.6 -13 1.8 -8 0 -6Z" fill="#a06f8e" transform="rotate(306)"/><path d="M0 -6 C-1.8 -8 -4.6 -13 -4 -17 A4 4 0 0 1 4 -17 C4.6 -13 1.8 -8 0 -6Z" fill="#a06f8e" transform="rotate(342)"/><circle r="5.5" fill="#2f3046"/></g></g>
<circle cx="1281" cy="706" r="6" fill="#7a7a7a" opacity="0.5"/><path d="M1276 700 L1281 698 L1280 710 L1276 711Z" fill="#e04040"/><path d="M1280 699 L1286 700 L1284 706 L1280 706Z" fill="#f0b020"/><path d="M1280 706 L1284 706 L1282 712Z" fill="#3a8ef6"/>
<circle cx="1321.7" cy="716" r="8" fill="#e4570f"/><circle cx="1319" cy="713" r="2.5" fill="#ffa060"/>
</svg>
<!-- vertical toolbar -->
<div class="a" style="left:1417px;top:126px;width:28px;height:954px;background:#efefef;border-left:1px solid #d0d0d0;border-right:1px solid #cfcfcf"></div>
<svg class="a" style="left:1418px;top:126px" width="27" height="200" viewBox="1418 126 27 200">
<g fill="#6a6a6a">
<path d="M1433 131 Q1440 133 1438 139 Q1436 143 1429 142 L1429 145 L1424 140 L1429 135 L1429 138 Q1434 138 1434 136 Q1434 134 1433 131Z"/>
<path d="M1429 159 Q1422 162 1425 167 Q1428 171 1433 170 L1433 173 L1438 168 L1433 163 L1433 166 Q1428 166 1428 164 Q1428 162 1429 159Z"/>
<path d="M1431 188 L1436 194 H1433 V202 H1429 V194 H1426Z"/>
<path d="M1431 231 L1436 225 H1433 V217 H1429 V225 H1426Z"/>
</g>
<g fill="none" stroke="#555" stroke-width="1.5"><circle cx="1429" cy="250" r="4.5"/><path d="M1432.5 253.5 L1436.5 257.5" stroke-width="2.2"/><path d="M1426.8 250 H1431.2 M1429 247.8 V252.2" stroke-width="1.2"/>
<circle cx="1429" cy="278" r="4.5"/><path d="M1432.5 281.5 L1436.5 285.5" stroke-width="2.2"/><path d="M1426.8 278 H1431.2" stroke-width="1.2"/></g>
<g stroke="#666" stroke-width="1.6"><path d="M1424 303 L1428 307 M1438 303 L1434 307 M1424 317 L1428 313 M1438 317 L1434 313"/></g>
<g fill="#666"><path d="M1429 307 H1425 V305Z M1433 307 H1437 V305Z M1429 313 H1425 V315Z M1433 313 H1437 V315Z"/></g>
</svg>


<!-- RIGHT PANEL -->

<div class="a" style="left:1445px;top:126px;width:264px;height:27px;background:#efefef;border-bottom:1px solid #cfcfcf"></div>
<div class="a" style="left:1445px;top:126px;width:88px;height:26px;background:#3a8ef6"></div>
<div class="a" style="left:1622px;top:126px;width:1px;height:26px;background:#d2d2d2"></div>
<div class="t c b" style="left:1445px;width:88px;top:132px;font-size:13px;color:#fff">Piece</div>
<div class="t c b" style="left:1533px;width:89px;top:132px;font-size:13px;color:#4a4f57">Line</div>
<div class="t c b" style="left:1622px;width:87px;top:132px;font-size:13px;color:#4a4f57">Point</div>
<div class="t c b" style="left:1477px;width:200px;top:169px;font-size:12.5px;color:#555">No Selection</div>
<svg class="a" style="left:1460px;top:190px" width="240" height="22" viewBox="1460 190 240 22">
<g stroke="#b3b3b3" stroke-width="1.3" fill="none">
<path d="M1470.5 196 V208 M1472 200 H1477 M1472 204 H1480"/>
<path d="M1497.9 196 V208 M1494 200 H1502 M1493 204 H1503"/>
<path d="M1525 196 V208 M1518 200 H1523.5 M1515.5 204 H1523.5"/>
<path d="M1560 196.5 H1571 M1563.5 198 V207 M1567.5 198 V202"/>
<path d="M1583 202 H1596 M1587 197 V207 M1591 197 V207"/>
<path d="M1606 207.5 H1618 M1609 198 V206 M1613 202 V206"/>
<path d="M1657 196 V208 M1653 196 V208"/><rect x="1655" y="199" width="3" height="7" fill="#b3b3b3" stroke="none"/>
<path d="M1674 202 H1687 M1674 198.5 H1687 M1674 205.5 H1687"/>
</g>
</svg>


</div>
</body></html>
